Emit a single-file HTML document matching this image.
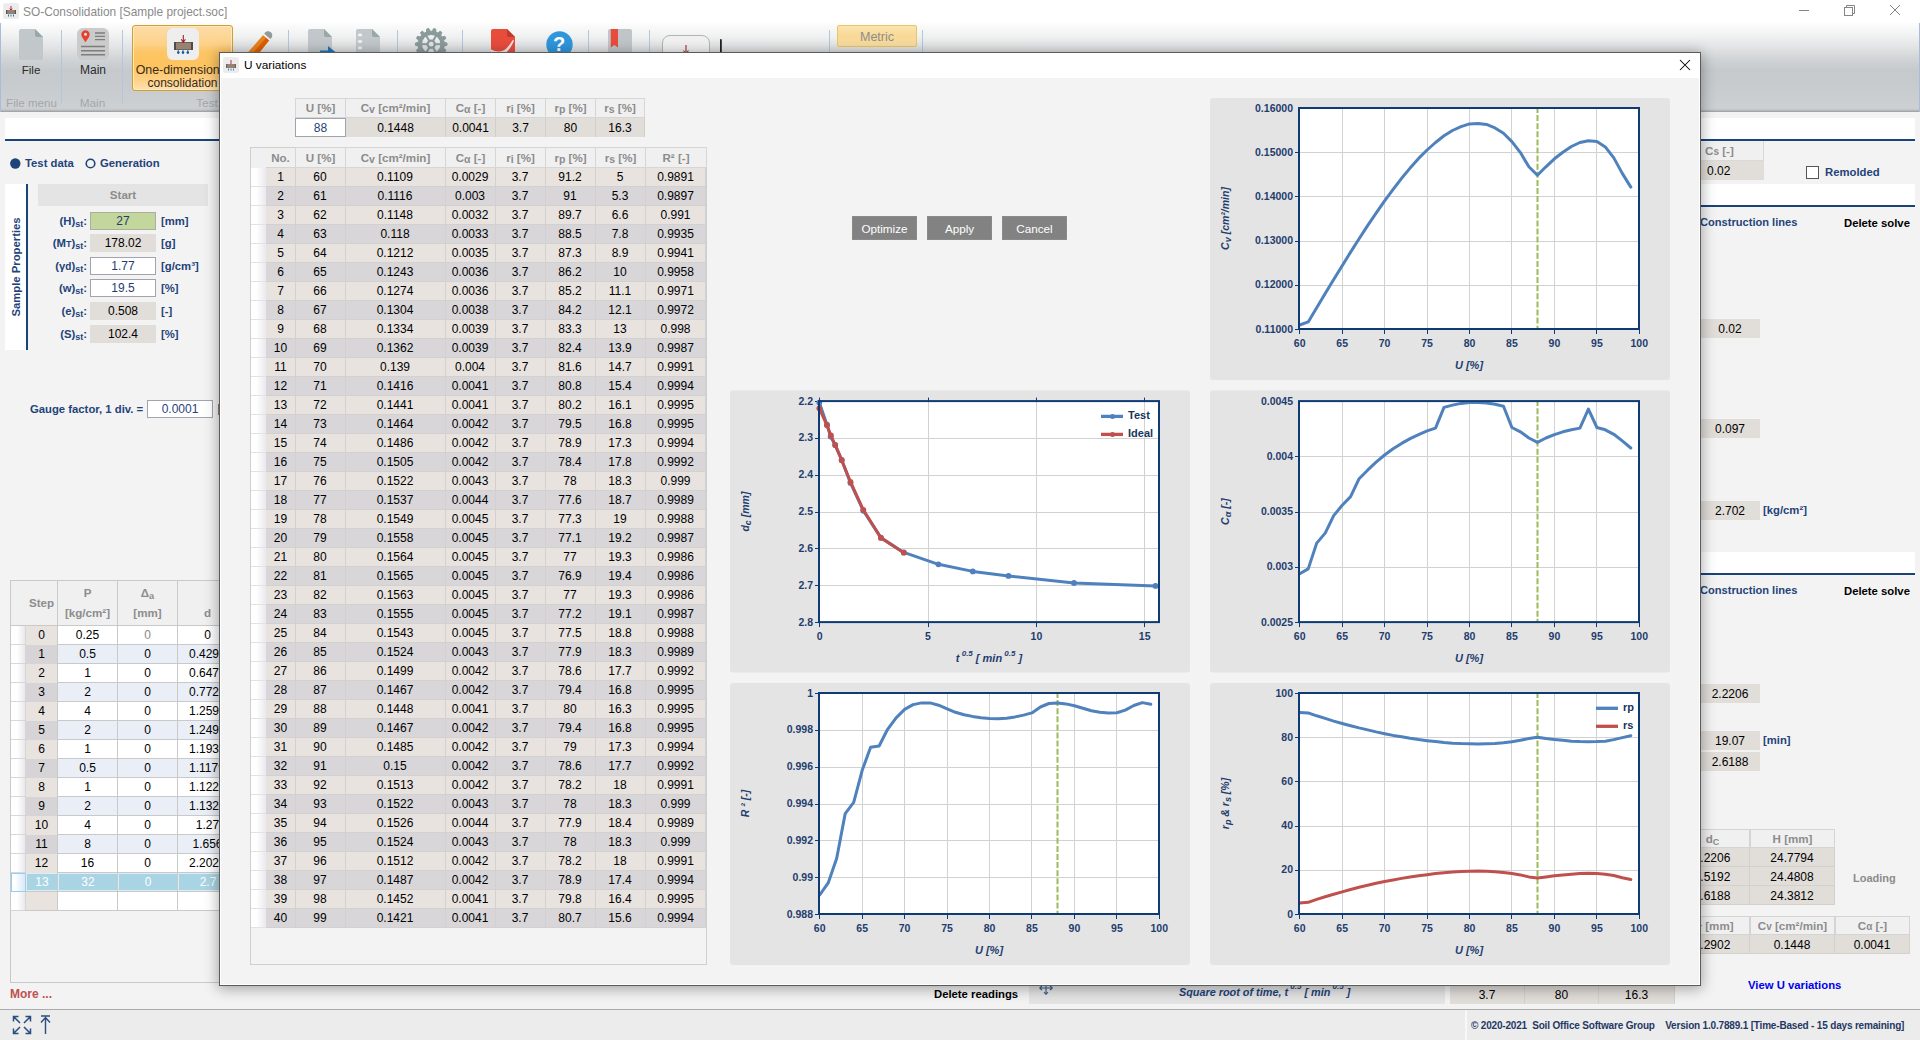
<!DOCTYPE html>
<html><head><meta charset="utf-8"><title>SO-Consolidation</title>
<style>
html,body{margin:0;padding:0}
body{width:1920px;height:1040px;position:relative;overflow:hidden;background:#f3f3f3;font-family:"Liberation Sans",sans-serif;font-size:12px;color:#000}
div,svg{position:absolute;box-sizing:border-box}
.t{text-align:center;white-space:nowrap;overflow:visible}
.b{font-weight:bold;font-size:11.3px}
.nv{color:#1f437a}
.gh{color:#8c8c8c;font-weight:bold;font-size:11.6px}
.l{text-align:left}
.r{text-align:right}
sub{font-size:80%;vertical-align:-2px;line-height:0}
sup{font-size:70%;vertical-align:4px;line-height:0}
svg text{font-family:"Liberation Sans",sans-serif}
</style></head>
<body>
<div style="left:0px;top:0px;width:1920px;height:23px;background:#fff"></div>
<svg style="left:3px;top:3px" width="16" height="16" viewBox="0 0 16 16"><rect x="0" y="0" width="16" height="16" rx="2.5" fill="#ececec"/><rect x="3" y="7" width="10" height="4" fill="#9a8270"/><rect x="3" y="7" width="1.2" height="4" fill="#555"/><rect x="11.8" y="7" width="1.2" height="4" fill="#555"/><path d="M8 3v4M6.8 5.6L8 7l1.2-1.4" stroke="#a0202a" stroke-width="0.9" fill="none"/><path d="M5.5 11.5v2M8 11.5v2M10.5 11.5v2" stroke="#1f78b4" stroke-width="1"/></svg>
<div class="t l" style="left:23px;top:1px;width:300px;height:23px;line-height:23px;color:#8a8a8a;font-size:11.9px">SO-Consolidation [Sample project.soc]</div>
<svg style="left:1780px;top:0" width="140" height="23" viewBox="0 0 140 23" fill="none" stroke="#858585" stroke-width="1"><path d="M19 10.5h10"/><rect x="64.5" y="7.5" width="8" height="8"/><path d="M66.5 7.5v-2h8v8h-2"/><path d="M110 5l10 10M120 5l-10 10"/></svg>
<div style="left:0px;top:23px;width:1920px;height:89px;background:linear-gradient(#fdfdfd 0px,#f1f2f2 12px,#e2e4e5 24px,#d1d4d6 36px,#c6cacd 47px,#c7cbce 60px,#cdd0d3 85px,#c4c7c9 87px,#a6a8aa 88px,#a0a2a3 89px)"></div>
<div style="left:0px;top:23px;width:1px;height:89px;background:#a9bcd8"></div>
<div style="left:1919px;top:23px;width:1px;height:89px;background:#a9bcd8"></div>
<div style="left:61px;top:30px;width:1px;height:74px;background:#b4c6de"></div>
<div style="left:122px;top:30px;width:1px;height:74px;background:#b4c6de"></div>
<div style="left:288px;top:30px;width:1px;height:74px;background:#b4c6de"></div>
<div style="left:397px;top:30px;width:1px;height:74px;background:#b4c6de"></div>
<div style="left:462px;top:30px;width:1px;height:74px;background:#b4c6de"></div>
<div style="left:588px;top:30px;width:1px;height:74px;background:#b4c6de"></div>
<div style="left:649px;top:30px;width:1px;height:74px;background:#b4c6de"></div>
<div style="left:829px;top:30px;width:1px;height:74px;background:#b4c6de"></div>
<div style="left:922px;top:30px;width:1px;height:74px;background:#b4c6de"></div>
<svg style="left:19px;top:29px" width="24" height="31" viewBox="0 0 24 31"><path d="M2 0h14l8 8v21a2 2 0 0 1-2 2h-20a2 2 0 0 1-2-2v-27a2 2 0 0 1 2-2z" fill="#c1c7ca"/><path d="M16 0l8 8h-6a2 2 0 0 1-2-2z" fill="#98a8a8"/></svg>
<div class="t" style="left:11px;top:62px;width:40px;height:16px;line-height:16px;color:#2b2b2b;font-size:11.6px">File</div>
<div class="t" style="left:1px;top:95px;width:61px;height:16px;line-height:16px;color:#a3a7aa;font-size:11.6px">File menu</div>
<svg style="left:77px;top:28px" width="32" height="32" viewBox="0 0 32 32"><rect width="32" height="32" rx="6" fill="#cbcbcb"/><g stroke="#7d7d7d" stroke-width="1.3"><path d="M18 5h10M18 8.4h10M18 11.7h10"/></g><g stroke="#7d7d7d" stroke-width="1.5"><path d="M4 18.6h24M4 22.7h24M4 26.8h24"/></g><path d="M8.5 2.2a4.2 4.2 0 0 1 4.2 4.2c0 2.6-2.6 5-4.2 7.8c-1.6-2.800-4.200-5.200-4.200-7.800a4.200 4.200 0 0 1 4.200-4.200z" fill="#e8402f"/><circle cx="8.500" cy="6.300" r="1.500" fill="#d9e4e8"/></svg>
<div class="t" style="left:73px;top:62px;width:40px;height:16px;line-height:16px;color:#2b2b2b;font-size:12px">Main</div>
<div class="t" style="left:62px;top:95px;width:61px;height:16px;line-height:16px;color:#a3a7aa;font-size:11.8px">Main</div>
<div style="left:132px;top:25px;width:101px;height:66px;border:1px solid #cf9f2f;border-radius:3px;background:linear-gradient(#fddca6 0,#fdd28a 18px,#fdc564 26px,#fdc45f 40px,#fdd186 54px,#fde2b2 64px);box-shadow:inset 0 0 0 1px #fee9c3"></div>
<svg style="left:167px;top:28px" width="32" height="32" viewBox="0 0 32 32"><rect width="32" height="32" rx="6" fill="#eeeeee"/><rect x="7" y="14" width="19" height="8" fill="#4b4b4d"/><rect x="9" y="14.600" width="15" height="6.900" fill="#9a8271"/><path d="M16.300 7v7.200M14.200 11.300l2.100 2.900l2.100-2.900" stroke="#a01f2a" stroke-width="1.100" fill="none"/><g fill="#0b5c9e"><circle cx="11.300" cy="24.600" r="1.300"/><circle cx="16" cy="24.600" r="1.300"/><circle cx="20.800" cy="24.600" r="1.300"/><path d="M11.300 22v2M16 22v2M20.800 22v2" stroke="#0b5c9e" stroke-width="0.800"/></g></svg>
<div class="t" style="left:132px;top:62px;width:101px;height:16px;line-height:16px;color:#3a2a1a;font-size:12.4px">One-dimensional</div>
<div class="t" style="left:132px;top:75px;width:101px;height:16px;line-height:16px;color:#3a2a1a;font-size:12px">consolidation</div>
<div class="t" style="left:177px;top:95px;width:60px;height:16px;line-height:16px;color:#a3a7aa;font-size:11.8px">Test</div>
<svg style="left:240px;top:28px" width="40" height="30" viewBox="0 0 40 30"><path d="M23.200 7l6 5.200L15 30H3z" fill="#e8821e"/><path d="M26.200 9.600l3 2.600L15 30H9z" fill="#dc5f02"/><path d="M23.200 7l1-1.200l6 5.200l-1 1.200z" fill="#f4f4f4"/><path d="M24.200 5.800a4.200 4.200 0 1 1 6 5.200z" fill="#909c9c"/></svg>
<svg overflow="visible" style="left:308px;top:29px" width="24" height="31" viewBox="0 0 24 31"><path d="M2 0h14l8 8v21a2 2 0 0 1-2 2h-20a2 2 0 0 1-2-2v-27a2 2 0 0 1 2-2z" fill="#c1c7ca"/><path d="M16 0l8 8h-6a2 2 0 0 1-2-2z" fill="#98a8a8"/><path d="M12 21.500h8v-4.500l8 6.500v8h-16z" fill="#2077b8"/></svg>
<svg style="left:356px;top:29px" width="24" height="31" viewBox="0 0 24 31"><path d="M2 0h14l8 8v21a2 2 0 0 1-2 2h-20a2 2 0 0 1-2-2v-27a2 2 0 0 1 2-2z" fill="#c1c7ca"/><path d="M16 0l8 8h-6a2 2 0 0 1-2-2z" fill="#98a8a8"/><g fill="#f1f3f3"><ellipse cx="4" cy="6" rx="2.200" ry="1.400"/><ellipse cx="4" cy="12.500" rx="2.200" ry="1.400"/><ellipse cx="4" cy="19" rx="2.200" ry="1.400"/><ellipse cx="4" cy="25.500" rx="2.200" ry="1.400"/></g></svg>
<svg style="left:414px;top:27px" width="34" height="34" viewBox="0 0 34 34"><path d="M30.2 15.4L33.0 16.1L33.0 18.3L30.2 19.0L29.7 21.2L31.9 23.0L30.9 25.1L28.1 24.4L26.7 26.3L27.9 28.8L26.1 30.2L23.9 28.4L21.8 29.5L21.8 32.3L19.6 32.8L18.4 30.2L16.0 30.2L14.8 32.8L12.6 32.3L12.6 29.5L10.5 28.4L8.3 30.2L6.5 28.8L7.7 26.3L6.3 24.4L3.5 25.1L2.5 23.0L4.7 21.2L4.2 19.0L1.4 18.3L1.4 16.1L4.2 15.4L4.7 13.2L2.5 11.4L3.5 9.3L6.3 10.0L7.7 8.1L6.5 5.6L8.3 4.2L10.5 6.0L12.6 4.9L12.6 2.1L14.8 1.6L16.0 4.2L18.4 4.2L19.6 1.6L21.8 2.1L21.8 4.9L23.9 6.0L26.1 4.2L27.9 5.6L26.7 8.1L28.1 10.0L30.9 9.3L31.9 11.4L29.7 13.2zM7.5 17.2a9.7 9.7 0 1 0 19.4 0a9.7 9.7 0 1 0 -19.4 0z" fill="#8a9a9a" fill-rule="evenodd" stroke="#8a9a9a" stroke-width="1" stroke-linejoin="round"/><path d="M17.2 17.2L27.7 17.2" stroke="#8a9a9a" stroke-width="2"/><path d="M17.2 17.2L22.4 26.3" stroke="#8a9a9a" stroke-width="2"/><path d="M17.2 17.2L12.0 26.3" stroke="#8a9a9a" stroke-width="2"/><path d="M17.2 17.2L6.7 17.2" stroke="#8a9a9a" stroke-width="2"/><path d="M17.2 17.2L11.9 8.1" stroke="#8a9a9a" stroke-width="2"/><path d="M17.2 17.2L22.4 8.1" stroke="#8a9a9a" stroke-width="2"/><circle cx="17.2" cy="17.2" r="4.700" fill="#8a9a9a"/><circle cx="17.2" cy="17.2" r="2.400" fill="#e2e3e4"/></svg>
<svg style="left:491px;top:29px" width="24" height="31" viewBox="0 0 24 31"><path d="M2 0h14l8 8v21a2 2 0 0 1-2 2h-20a2 2 0 0 1-2-2v-27a2 2 0 0 1 2-2z" fill="#e84c3d"/><path d="M16 0l8 8h-6a2 2 0 0 1-2-2z" fill="#c0392b"/><path d="M0 20.300c5 3 11 3 15-0.500c3-3 5-6 7-9l1 1c-2 4-4 8-7 11c-1 2-2 5-2 7h-2c0-2 0.500-4 1.500-6c-4 2.500-9 2.500-13.500 0z" fill="#f3e9e7"/></svg>
<svg style="left:546px;top:31px" width="28" height="28" viewBox="0 0 28 28"><circle cx="13.500" cy="13.500" r="13.200" fill="#2f96dc"/><text x="13" y="20.200" font-size="20" font-weight="bold" fill="#fff" text-anchor="middle">?</text></svg>
<svg style="left:608px;top:29px" width="25" height="31" viewBox="0 0 25 31"><rect width="24" height="31" rx="2" fill="#bfc5c8"/><path d="M2.800 0h7.200v18.500l-3.600-2.600l-3.600 2.600z" fill="#e84c3d"/></svg>
<div style="left:662px;top:35px;width:48px;height:40px;border:1px solid #b4b4b4;border-radius:8px;background:#f1f1f1"></div>
<svg style="left:680px;top:44px" width="12" height="12" viewBox="0 0 12 12"><path d="M6 1v8M3.500 6.500L6 9.500L8.500 6.500" stroke="#a02a38" stroke-width="1.100" fill="none"/></svg>
<div style="left:720px;top:39px;width:2px;height:20px;background:linear-gradient(90deg,#222 60%,#888);border-radius:1px 2px 0 0"></div>
<div style="left:837px;top:25px;width:80px;height:22px;border:1px solid #e9c566;border-radius:2px;background:linear-gradient(#fbe3b0,#f8d995 50%,#f9dda0)"></div>
<div class="t" style="left:837px;top:26px;width:80px;height:22px;line-height:22px;color:#8e8e8e;font-size:12.5px">Metric</div>
<div style="left:5px;top:118px;width:1910px;height:21px;background:#fff"></div>
<div style="left:5px;top:139px;width:1910px;height:2px;background:#1a4378"></div>
<div style="left:1700px;top:184px;width:215px;height:21px;background:#fff"></div>
<div style="left:1700px;top:205px;width:215px;height:2px;background:#1a4378"></div>
<div style="left:1700px;top:552px;width:215px;height:21px;background:#fff"></div>
<div style="left:1700px;top:573px;width:215px;height:2px;background:#1a4378"></div>
<svg style="left:9px;top:157px" width="100" height="13" viewBox="0 0 100 13"><circle cx="6.300" cy="6.500" r="5.200" fill="#1f4479"/><circle cx="81.500" cy="6.500" r="4.300" fill="none" stroke="#1f4479" stroke-width="1.600"/></svg>
<div class="t l b nv" style="left:25px;top:155px;width:60px;height:16px;line-height:16px;">Test data</div>
<div class="t l b nv" style="left:100px;top:155px;width:70px;height:16px;line-height:16px;">Generation</div>
<div style="left:5px;top:184px;width:21px;height:166px;background:#fff"></div>
<div style="left:26px;top:184px;width:2px;height:166px;background:#1a4378"></div>
<div class="t b nv" style="left:-59px;top:259px;width:150px;height:16px;line-height:16px;transform:rotate(-90deg)">Sample Properties</div>
<div style="left:38px;top:184px;width:170px;height:22px;background:#e4e4e4"></div>
<div class="t gh" style="left:38px;top:184px;width:170px;height:22px;line-height:22px;">Start</div>
<div class="t r b nv" style="left:31px;top:212px;width:56px;height:18px;line-height:18px;">(H)<sub>st</sub>:</div>
<div class="t" style="left:90px;top:212px;width:66px;height:18px;line-height:16px;background:#c3d69b;border:1px solid #a9b0a0;color:#1f3d6e">27</div>
<div class="t l b nv" style="left:161px;top:212px;width:50px;height:18px;line-height:18px;">[mm]</div>
<div class="t r b nv" style="left:31px;top:234px;width:56px;height:18px;line-height:18px;">(M<span style="font-size:9px">T</span>)<sub>st</sub>:</div>
<div class="t" style="left:90px;top:234px;width:66px;height:18px;line-height:18px;background:#e1ddd9;color:#000">178.02</div>
<div class="t l b nv" style="left:161px;top:234px;width:50px;height:18px;line-height:18px;">[g]</div>
<div class="t r b nv" style="left:31px;top:257px;width:56px;height:18px;line-height:18px;">(γ<span style="font-size:10px">d</span>)<sub>st</sub>:</div>
<div class="t" style="left:90px;top:257px;width:66px;height:18px;line-height:16px;background:#fff;border:1px solid #a3a3ad;color:#1f3d6e">1.77</div>
<div class="t l b nv" style="left:161px;top:257px;width:50px;height:18px;line-height:18px;">[g/cm³]</div>
<div class="t r b nv" style="left:31px;top:279px;width:56px;height:18px;line-height:18px;">(w)<sub>st</sub>:</div>
<div class="t" style="left:90px;top:279px;width:66px;height:18px;line-height:16px;background:#fff;border:1px solid #a3a3ad;color:#1f3d6e">19.5</div>
<div class="t l b nv" style="left:161px;top:279px;width:50px;height:18px;line-height:18px;">[%]</div>
<div class="t r b nv" style="left:31px;top:302px;width:56px;height:18px;line-height:18px;">(e)<sub>st</sub>:</div>
<div class="t" style="left:90px;top:302px;width:66px;height:18px;line-height:18px;background:#e1ddd9;color:#000">0.508</div>
<div class="t l b nv" style="left:161px;top:302px;width:50px;height:18px;line-height:18px;">[-]</div>
<div class="t r b nv" style="left:31px;top:325px;width:56px;height:18px;line-height:18px;">(S)<sub>st</sub>:</div>
<div class="t" style="left:90px;top:325px;width:66px;height:18px;line-height:18px;background:#e1ddd9;color:#000">102.4</div>
<div class="t l b nv" style="left:161px;top:325px;width:50px;height:18px;line-height:18px;">[%]</div>
<div class="t l b nv" style="left:30px;top:400px;width:113px;height:18px;line-height:18px;">Gauge factor, 1 div. =</div>
<div class="t nv" style="left:147px;top:400px;width:66px;height:18px;line-height:16px;background:#fff;border:1px solid #a3a3ad">0.0001</div>
<div style="left:218px;top:404px;width:1px;height:11px;background:#9a7a6a"></div>
<div style="left:10px;top:580px;width:215px;height:403px;background:#f3f3f3;border:1px solid #c9c9c9"></div>
<div style="left:11px;top:581px;width:214px;height:45px;background:#f0f0f0;border-bottom:1px solid #c9c9c9"></div>
<div style="left:57px;top:581px;width:1px;height:330px;background:#c9c9c9"></div>
<div style="left:117px;top:581px;width:1px;height:330px;background:#c9c9c9"></div>
<div style="left:177px;top:581px;width:1px;height:330px;background:#c9c9c9"></div>
<div class="t gh" style="left:26px;top:594px;width:31px;height:18px;line-height:18px;">Step</div>
<div class="t gh" style="left:58px;top:584px;width:59px;height:18px;line-height:18px;">P</div>
<div class="t gh" style="left:58px;top:604px;width:59px;height:18px;line-height:18px;">[kg/cm²]</div>
<div class="t gh" style="left:118px;top:584px;width:59px;height:18px;line-height:18px;">Δ<sub>a</sub></div>
<div class="t gh" style="left:118px;top:604px;width:59px;height:18px;line-height:18px;">[mm]</div>
<div class="t gh" style="left:178px;top:604px;width:59px;height:18px;line-height:18px;">d</div>
<div style="left:11px;top:626px;width:15px;height:19px;background:linear-gradient(90deg,#fff 40%,#e6e6ea);border-bottom:1px solid #d8d8d8"></div>
<div class="t" style="left:26px;top:626px;width:31px;height:19px;line-height:19px;background:#e8e3df">0</div>
<div class="t" style="left:58px;top:626px;width:59px;height:19px;line-height:19px;background:#fff;border-bottom:1px solid #c9c9c9">0.25</div>
<div class="t" style="left:118px;top:626px;width:59px;height:19px;line-height:19px;background:#fff;border-bottom:1px solid #c9c9c9;color:#888">0</div>
<div class="t" style="left:178px;top:626px;width:59px;height:19px;line-height:19px;background:#fff;border-bottom:1px solid #c9c9c9">0</div>
<div style="left:57px;top:626px;width:1px;height:19px;background:#c9c9c9"></div>
<div style="left:117px;top:626px;width:1px;height:19px;background:#c9c9c9"></div>
<div style="left:177px;top:626px;width:1px;height:19px;background:#c9c9c9"></div>
<div style="left:11px;top:645px;width:15px;height:19px;background:linear-gradient(90deg,#fff 40%,#e6e6ea);border-bottom:1px solid #d8d8d8"></div>
<div class="t" style="left:26px;top:645px;width:31px;height:19px;line-height:19px;background:#d6d4d6">1</div>
<div class="t" style="left:58px;top:645px;width:59px;height:19px;line-height:19px;background:#e9eef7;border-bottom:1px solid #c9c9c9">0.5</div>
<div class="t" style="left:118px;top:645px;width:59px;height:19px;line-height:19px;background:#e9eef7;border-bottom:1px solid #c9c9c9">0</div>
<div class="t" style="left:178px;top:645px;width:70px;height:19px;line-height:19px;background:#e9eef7;border-bottom:1px solid #c9c9c9;text-align:left;padding-left:11px">0.4299</div>
<div style="left:57px;top:645px;width:1px;height:19px;background:#c9c9c9"></div>
<div style="left:117px;top:645px;width:1px;height:19px;background:#c9c9c9"></div>
<div style="left:177px;top:645px;width:1px;height:19px;background:#c9c9c9"></div>
<div style="left:11px;top:664px;width:15px;height:19px;background:linear-gradient(90deg,#fff 40%,#e6e6ea);border-bottom:1px solid #d8d8d8"></div>
<div class="t" style="left:26px;top:664px;width:31px;height:19px;line-height:19px;background:#e8e3df">2</div>
<div class="t" style="left:58px;top:664px;width:59px;height:19px;line-height:19px;background:#fff;border-bottom:1px solid #c9c9c9">1</div>
<div class="t" style="left:118px;top:664px;width:59px;height:19px;line-height:19px;background:#fff;border-bottom:1px solid #c9c9c9">0</div>
<div class="t" style="left:178px;top:664px;width:70px;height:19px;line-height:19px;background:#fff;border-bottom:1px solid #c9c9c9;text-align:left;padding-left:11px">0.6479</div>
<div style="left:57px;top:664px;width:1px;height:19px;background:#c9c9c9"></div>
<div style="left:117px;top:664px;width:1px;height:19px;background:#c9c9c9"></div>
<div style="left:177px;top:664px;width:1px;height:19px;background:#c9c9c9"></div>
<div style="left:11px;top:683px;width:15px;height:19px;background:linear-gradient(90deg,#fff 40%,#e6e6ea);border-bottom:1px solid #d8d8d8"></div>
<div class="t" style="left:26px;top:683px;width:31px;height:19px;line-height:19px;background:#d6d4d6">3</div>
<div class="t" style="left:58px;top:683px;width:59px;height:19px;line-height:19px;background:#e9eef7;border-bottom:1px solid #c9c9c9">2</div>
<div class="t" style="left:118px;top:683px;width:59px;height:19px;line-height:19px;background:#e9eef7;border-bottom:1px solid #c9c9c9">0</div>
<div class="t" style="left:178px;top:683px;width:70px;height:19px;line-height:19px;background:#e9eef7;border-bottom:1px solid #c9c9c9;text-align:left;padding-left:11px">0.7729</div>
<div style="left:57px;top:683px;width:1px;height:19px;background:#c9c9c9"></div>
<div style="left:117px;top:683px;width:1px;height:19px;background:#c9c9c9"></div>
<div style="left:177px;top:683px;width:1px;height:19px;background:#c9c9c9"></div>
<div style="left:11px;top:702px;width:15px;height:19px;background:linear-gradient(90deg,#fff 40%,#e6e6ea);border-bottom:1px solid #d8d8d8"></div>
<div class="t" style="left:26px;top:702px;width:31px;height:19px;line-height:19px;background:#e8e3df">4</div>
<div class="t" style="left:58px;top:702px;width:59px;height:19px;line-height:19px;background:#fff;border-bottom:1px solid #c9c9c9">4</div>
<div class="t" style="left:118px;top:702px;width:59px;height:19px;line-height:19px;background:#fff;border-bottom:1px solid #c9c9c9">0</div>
<div class="t" style="left:178px;top:702px;width:70px;height:19px;line-height:19px;background:#fff;border-bottom:1px solid #c9c9c9;text-align:left;padding-left:11px">1.2599</div>
<div style="left:57px;top:702px;width:1px;height:19px;background:#c9c9c9"></div>
<div style="left:117px;top:702px;width:1px;height:19px;background:#c9c9c9"></div>
<div style="left:177px;top:702px;width:1px;height:19px;background:#c9c9c9"></div>
<div style="left:11px;top:721px;width:15px;height:19px;background:linear-gradient(90deg,#fff 40%,#e6e6ea);border-bottom:1px solid #d8d8d8"></div>
<div class="t" style="left:26px;top:721px;width:31px;height:19px;line-height:19px;background:#d6d4d6">5</div>
<div class="t" style="left:58px;top:721px;width:59px;height:19px;line-height:19px;background:#e9eef7;border-bottom:1px solid #c9c9c9">2</div>
<div class="t" style="left:118px;top:721px;width:59px;height:19px;line-height:19px;background:#e9eef7;border-bottom:1px solid #c9c9c9">0</div>
<div class="t" style="left:178px;top:721px;width:70px;height:19px;line-height:19px;background:#e9eef7;border-bottom:1px solid #c9c9c9;text-align:left;padding-left:11px">1.2499</div>
<div style="left:57px;top:721px;width:1px;height:19px;background:#c9c9c9"></div>
<div style="left:117px;top:721px;width:1px;height:19px;background:#c9c9c9"></div>
<div style="left:177px;top:721px;width:1px;height:19px;background:#c9c9c9"></div>
<div style="left:11px;top:740px;width:15px;height:19px;background:linear-gradient(90deg,#fff 40%,#e6e6ea);border-bottom:1px solid #d8d8d8"></div>
<div class="t" style="left:26px;top:740px;width:31px;height:19px;line-height:19px;background:#e8e3df">6</div>
<div class="t" style="left:58px;top:740px;width:59px;height:19px;line-height:19px;background:#fff;border-bottom:1px solid #c9c9c9">1</div>
<div class="t" style="left:118px;top:740px;width:59px;height:19px;line-height:19px;background:#fff;border-bottom:1px solid #c9c9c9">0</div>
<div class="t" style="left:178px;top:740px;width:70px;height:19px;line-height:19px;background:#fff;border-bottom:1px solid #c9c9c9;text-align:left;padding-left:11px">1.1939</div>
<div style="left:57px;top:740px;width:1px;height:19px;background:#c9c9c9"></div>
<div style="left:117px;top:740px;width:1px;height:19px;background:#c9c9c9"></div>
<div style="left:177px;top:740px;width:1px;height:19px;background:#c9c9c9"></div>
<div style="left:11px;top:759px;width:15px;height:19px;background:linear-gradient(90deg,#fff 40%,#e6e6ea);border-bottom:1px solid #d8d8d8"></div>
<div class="t" style="left:26px;top:759px;width:31px;height:19px;line-height:19px;background:#d6d4d6">7</div>
<div class="t" style="left:58px;top:759px;width:59px;height:19px;line-height:19px;background:#e9eef7;border-bottom:1px solid #c9c9c9">0.5</div>
<div class="t" style="left:118px;top:759px;width:59px;height:19px;line-height:19px;background:#e9eef7;border-bottom:1px solid #c9c9c9">0</div>
<div class="t" style="left:178px;top:759px;width:70px;height:19px;line-height:19px;background:#e9eef7;border-bottom:1px solid #c9c9c9;text-align:left;padding-left:11px">1.1179</div>
<div style="left:57px;top:759px;width:1px;height:19px;background:#c9c9c9"></div>
<div style="left:117px;top:759px;width:1px;height:19px;background:#c9c9c9"></div>
<div style="left:177px;top:759px;width:1px;height:19px;background:#c9c9c9"></div>
<div style="left:11px;top:778px;width:15px;height:19px;background:linear-gradient(90deg,#fff 40%,#e6e6ea);border-bottom:1px solid #d8d8d8"></div>
<div class="t" style="left:26px;top:778px;width:31px;height:19px;line-height:19px;background:#e8e3df">8</div>
<div class="t" style="left:58px;top:778px;width:59px;height:19px;line-height:19px;background:#fff;border-bottom:1px solid #c9c9c9">1</div>
<div class="t" style="left:118px;top:778px;width:59px;height:19px;line-height:19px;background:#fff;border-bottom:1px solid #c9c9c9">0</div>
<div class="t" style="left:178px;top:778px;width:70px;height:19px;line-height:19px;background:#fff;border-bottom:1px solid #c9c9c9;text-align:left;padding-left:11px">1.1229</div>
<div style="left:57px;top:778px;width:1px;height:19px;background:#c9c9c9"></div>
<div style="left:117px;top:778px;width:1px;height:19px;background:#c9c9c9"></div>
<div style="left:177px;top:778px;width:1px;height:19px;background:#c9c9c9"></div>
<div style="left:11px;top:797px;width:15px;height:19px;background:linear-gradient(90deg,#fff 40%,#e6e6ea);border-bottom:1px solid #d8d8d8"></div>
<div class="t" style="left:26px;top:797px;width:31px;height:19px;line-height:19px;background:#d6d4d6">9</div>
<div class="t" style="left:58px;top:797px;width:59px;height:19px;line-height:19px;background:#e9eef7;border-bottom:1px solid #c9c9c9">2</div>
<div class="t" style="left:118px;top:797px;width:59px;height:19px;line-height:19px;background:#e9eef7;border-bottom:1px solid #c9c9c9">0</div>
<div class="t" style="left:178px;top:797px;width:70px;height:19px;line-height:19px;background:#e9eef7;border-bottom:1px solid #c9c9c9;text-align:left;padding-left:11px">1.1329</div>
<div style="left:57px;top:797px;width:1px;height:19px;background:#c9c9c9"></div>
<div style="left:117px;top:797px;width:1px;height:19px;background:#c9c9c9"></div>
<div style="left:177px;top:797px;width:1px;height:19px;background:#c9c9c9"></div>
<div style="left:11px;top:816px;width:15px;height:19px;background:linear-gradient(90deg,#fff 40%,#e6e6ea);border-bottom:1px solid #d8d8d8"></div>
<div class="t" style="left:26px;top:816px;width:31px;height:19px;line-height:19px;background:#e8e3df">10</div>
<div class="t" style="left:58px;top:816px;width:59px;height:19px;line-height:19px;background:#fff;border-bottom:1px solid #c9c9c9">4</div>
<div class="t" style="left:118px;top:816px;width:59px;height:19px;line-height:19px;background:#fff;border-bottom:1px solid #c9c9c9">0</div>
<div class="t" style="left:178px;top:816px;width:59px;height:19px;line-height:19px;background:#fff;border-bottom:1px solid #c9c9c9">1.27</div>
<div style="left:57px;top:816px;width:1px;height:19px;background:#c9c9c9"></div>
<div style="left:117px;top:816px;width:1px;height:19px;background:#c9c9c9"></div>
<div style="left:177px;top:816px;width:1px;height:19px;background:#c9c9c9"></div>
<div style="left:11px;top:835px;width:15px;height:19px;background:linear-gradient(90deg,#fff 40%,#e6e6ea);border-bottom:1px solid #d8d8d8"></div>
<div class="t" style="left:26px;top:835px;width:31px;height:19px;line-height:19px;background:#d6d4d6">11</div>
<div class="t" style="left:58px;top:835px;width:59px;height:19px;line-height:19px;background:#e9eef7;border-bottom:1px solid #c9c9c9">8</div>
<div class="t" style="left:118px;top:835px;width:59px;height:19px;line-height:19px;background:#e9eef7;border-bottom:1px solid #c9c9c9">0</div>
<div class="t" style="left:178px;top:835px;width:59px;height:19px;line-height:19px;background:#e9eef7;border-bottom:1px solid #c9c9c9">1.656</div>
<div style="left:57px;top:835px;width:1px;height:19px;background:#c9c9c9"></div>
<div style="left:117px;top:835px;width:1px;height:19px;background:#c9c9c9"></div>
<div style="left:177px;top:835px;width:1px;height:19px;background:#c9c9c9"></div>
<div style="left:11px;top:854px;width:15px;height:19px;background:linear-gradient(90deg,#fff 40%,#e6e6ea);border-bottom:1px solid #d8d8d8"></div>
<div class="t" style="left:26px;top:854px;width:31px;height:19px;line-height:19px;background:#e8e3df">12</div>
<div class="t" style="left:58px;top:854px;width:59px;height:19px;line-height:19px;background:#fff;border-bottom:1px solid #c9c9c9">16</div>
<div class="t" style="left:118px;top:854px;width:59px;height:19px;line-height:19px;background:#fff;border-bottom:1px solid #c9c9c9">0</div>
<div class="t" style="left:178px;top:854px;width:70px;height:19px;line-height:19px;background:#fff;border-bottom:1px solid #c9c9c9;text-align:left;padding-left:11px">2.2029</div>
<div style="left:57px;top:854px;width:1px;height:19px;background:#c9c9c9"></div>
<div style="left:117px;top:854px;width:1px;height:19px;background:#c9c9c9"></div>
<div style="left:177px;top:854px;width:1px;height:19px;background:#c9c9c9"></div>
<div style="left:11px;top:873px;width:15px;height:19px;background:linear-gradient(90deg,#fff 40%,#e6e6ea);border-bottom:1px solid #d8d8d8"></div>
<div style="left:11px;top:873px;width:214px;height:19px;background:#fff;border-bottom:1px solid #c9c9c9"></div>
<div style="left:11px;top:873px;width:15px;height:19px;background:linear-gradient(90deg,#fff 20%,#d6eaf6);border:1px solid #8fd0f7"></div>
<div class="t" style="left:27px;top:874px;width:30px;height:16px;line-height:17.0px;background:#a9d4e3;color:#fff;box-shadow:0 0 0 1px #dceef5">13</div>
<div class="t" style="left:59px;top:874px;width:58px;height:16px;line-height:17.0px;background:#a9d4e3;color:#fff;box-shadow:0 0 0 1px #dceef5">32</div>
<div class="t" style="left:119px;top:874px;width:58px;height:16px;line-height:17.0px;background:#a9d4e3;color:#fff;box-shadow:0 0 0 1px #dceef5">0</div>
<div class="t" style="left:179px;top:874px;width:58px;height:16px;line-height:17.0px;background:#a9d4e3;color:#fff;box-shadow:0 0 0 1px #dceef5">2.7</div>
<div style="left:57px;top:873px;width:1px;height:19px;background:#c9c9c9"></div>
<div style="left:117px;top:873px;width:1px;height:19px;background:#c9c9c9"></div>
<div style="left:177px;top:873px;width:1px;height:19px;background:#c9c9c9"></div>
<div style="left:11px;top:892px;width:15px;height:19px;background:linear-gradient(90deg,#fff 40%,#e6e6ea)"></div>
<div style="left:26px;top:892px;width:31px;height:19px;background:#e8e3df;border-bottom:1px solid #c9c9c9"></div>
<div style="left:11px;top:910px;width:15px;height:1px;background:#d4d4d4"></div>
<div style="left:58px;top:892px;width:167px;height:19px;background:#fff;border-bottom:1px solid #c9c9c9"></div>
<div style="left:25px;top:626px;width:1px;height:285px;background:rgba(200,200,200,0.55)"></div>
<div style="left:57px;top:892px;width:1px;height:19px;background:#c9c9c9"></div>
<div style="left:117px;top:892px;width:1px;height:19px;background:#c9c9c9"></div>
<div style="left:177px;top:892px;width:1px;height:19px;background:#c9c9c9"></div>
<div class="t l b" style="left:10px;top:986px;width:50px;height:16px;line-height:16px;color:#c0504d;font-size:12px">More ...</div>
<div style="left:1700px;top:141px;width:64px;height:20px;background:#f0f0f0;border-bottom:1px solid #d9d9d9;border-right:1px solid #d9d9d9"></div>
<div class="t l gh" style="left:1705px;top:141px;width:40px;height:20px;line-height:20px;">C<span style="font-size:10px">s</span> [-]</div>
<div style="left:1700px;top:161px;width:64px;height:19px;background:#e1ddd9"></div>
<div class="t l" style="left:1707px;top:161px;width:40px;height:19px;line-height:21px;">0.02</div>
<div style="left:1806px;top:166px;width:13px;height:13px;background:#fff;border:1px solid #555"></div>
<div class="t l b nv" style="left:1825px;top:164px;width:70px;height:16px;line-height:16px;">Remolded</div>
<div class="t l b nv" style="left:1700px;top:214px;width:120px;height:16px;line-height:16px;font-size:11.1px">Construction lines</div>
<div class="t l b" style="left:1844px;top:215px;width:70px;height:16px;line-height:16px;">Delete solve</div>
<div class="t l b nv" style="left:1700px;top:582px;width:120px;height:16px;line-height:16px;font-size:11.1px">Construction lines</div>
<div class="t l b" style="left:1844px;top:583px;width:70px;height:16px;line-height:16px;">Delete solve</div>
<div class="t" style="left:1700px;top:319px;width:60px;height:19px;line-height:21px;background:#e1ddd9">0.02</div>
<div class="t" style="left:1700px;top:419px;width:60px;height:19px;line-height:21px;background:#e1ddd9">0.097</div>
<div class="t" style="left:1700px;top:501px;width:60px;height:19px;line-height:21px;background:#e1ddd9">2.702</div>
<div class="t" style="left:1700px;top:684px;width:60px;height:19px;line-height:21px;background:#e1ddd9">2.2206</div>
<div class="t" style="left:1700px;top:731px;width:60px;height:19px;line-height:21px;background:#e1ddd9">19.07</div>
<div class="t" style="left:1700px;top:752px;width:60px;height:19px;line-height:21px;background:#e1ddd9">2.6188</div>
<div class="t l b nv" style="left:1763px;top:501px;width:60px;height:18px;line-height:18px;">[kg/cm²]</div>
<div class="t l b nv" style="left:1763px;top:731px;width:60px;height:18px;line-height:18px;">[min]</div>
<div class="t gh" style="left:1675px;top:829px;width:75px;height:19px;line-height:17px;background:#f0f0f0;border:1px solid #d4d4d4">d<span style="font-size:9px;vertical-align:-2px">C</span></div>
<div class="t gh" style="left:1750px;top:829px;width:85px;height:19px;line-height:17px;background:#f0f0f0;border:1px solid #d4d4d4">H [mm]</div>
<div class="t" style="left:1675px;top:848px;width:75px;height:19px;line-height:21px;background:#e1ddd9;border-right:1px solid #d4d0cc;border-bottom:1px solid #d4d0cc">2.2206</div>
<div class="t" style="left:1750px;top:848px;width:85px;height:19px;line-height:21px;background:#e1ddd9;border-right:1px solid #d4d0cc;border-bottom:1px solid #d4d0cc">24.7794</div>
<div class="t" style="left:1675px;top:867px;width:75px;height:19px;line-height:21px;background:#e1ddd9;border-right:1px solid #d4d0cc;border-bottom:1px solid #d4d0cc">2.5192</div>
<div class="t" style="left:1750px;top:867px;width:85px;height:19px;line-height:21px;background:#e1ddd9;border-right:1px solid #d4d0cc;border-bottom:1px solid #d4d0cc">24.4808</div>
<div class="t" style="left:1675px;top:886px;width:75px;height:19px;line-height:21px;background:#e1ddd9;border-right:1px solid #d4d0cc;border-bottom:1px solid #d4d0cc">2.6188</div>
<div class="t" style="left:1750px;top:886px;width:85px;height:19px;line-height:21px;background:#e1ddd9;border-right:1px solid #d4d0cc;border-bottom:1px solid #d4d0cc">24.3812</div>
<div class="t gh" style="left:1675px;top:916px;width:75px;height:19px;line-height:17px;background:#f0f0f0;border:1px solid #d4d4d4">d<span style="font-size:9px">r</span> [mm]</div>
<div class="t gh" style="left:1750px;top:916px;width:85px;height:19px;line-height:17px;background:#f0f0f0;border:1px solid #d4d4d4">C<span style="font-size:10px">v</span> [cm²/min]</div>
<div class="t gh" style="left:1835px;top:916px;width:75px;height:19px;line-height:17px;background:#f0f0f0;border:1px solid #d4d4d4">C<span style="font-size:10px">α</span> [-]</div>
<div class="t" style="left:1675px;top:935px;width:75px;height:19px;line-height:21px;background:#e1ddd9;border-right:1px solid #d4d0cc;border-bottom:1px solid #d4d0cc">2.2902</div>
<div class="t" style="left:1750px;top:935px;width:85px;height:19px;line-height:21px;background:#e1ddd9;border-right:1px solid #d4d0cc;border-bottom:1px solid #d4d0cc">0.1448</div>
<div class="t" style="left:1835px;top:935px;width:75px;height:19px;line-height:21px;background:#e1ddd9;border-right:1px solid #d4d0cc;border-bottom:1px solid #d4d0cc">0.0041</div>
<div class="t l gh" style="left:1853px;top:870px;width:50px;height:16px;line-height:16px;font-size:11px">Loading</div>
<div class="t l b" style="left:1748px;top:977px;width:100px;height:16px;line-height:16px;color:#0000ee">View U variations</div>
<div class="t l b" style="left:934px;top:986px;width:90px;height:16px;line-height:16px;">Delete readings</div>
<div style="left:1029px;top:960px;width:416px;height:44px;background:#e4e4e4"></div>
<svg style="left:1038px;top:980px" width="16" height="16" viewBox="0 0 16 16" fill="none" stroke="#3b5f8f" stroke-width="1.100"><path d="M8 1v13M1.500 8h13M8 14.500l-2-2.500M8 14.500l2-2.500M1.500 8l2.500-2M1.500 8l2.500 2M14.500 8l-2.500-2M14.500 8l-2.500 2"/></svg>
<div class="t b nv" style="left:1179px;top:984px;width:172px;height:16px;line-height:16px;font-style:italic;font-size:10.85px;text-align:left">Square root of time, t<sup style="font-size:8px;vertical-align:7px"> 0.5</sup> [ min<sup style="font-size:8px;vertical-align:7px"> 0.5</sup> ]</div>
<div class="t" style="left:1450px;top:985px;width:75px;height:19px;line-height:21px;background:#e1ddd9;border-right:1px solid #d4d0cc">3.7</div>
<div class="t" style="left:1525px;top:985px;width:74px;height:19px;line-height:21px;background:#e1ddd9;border-right:1px solid #d4d0cc">80</div>
<div class="t" style="left:1599px;top:985px;width:76px;height:19px;line-height:21px;background:#e1ddd9;border-right:1px solid #d4d0cc">16.3</div>
<div style="left:0px;top:1009px;width:1920px;height:31px;background:#ececec;border-top:1px solid #ababab"></div>
<div style="left:1465px;top:1010px;width:2px;height:30px;background:#f8f8f8"></div>
<svg style="left:12px;top:1015px" width="42" height="20" viewBox="0 0 42 20" fill="none" stroke="#2a4d7f" stroke-width="1.500"><path d="M1.500 6.500v-5h5M1.500 1.500l6.500 6.500M18.500 6.500v-5h-5M18.500 1.500l-6.500 6.500M1.500 13.500v5h5M1.500 18.500l6.500-6.500M18.500 13.500v5h-5M18.500 18.500l-6.500-6.500"/><path d="M33.500 19v-16M29 7.500l4.500-5l4.500 5M29 1h9" stroke-width="1.400"/></svg>
<div class="t l b" style="left:1471px;top:1018px;width:440px;height:16px;line-height:16px;font-size:10px;letter-spacing:-0.18px;color:#1f3864">© 2020-2021&nbsp; Soil Office Software Group&nbsp;&nbsp;&nbsp; Version 1.0.7889.1 [Time-Based - 15 days remaining]</div>
<div style="left:219px;top:52px;width:1482px;height:934px;background:#f3f3f3;border:1px solid #5b5b5b;box-shadow:0 2px 13px 1px rgba(0,0,0,0.33)"></div>
<div style="left:220px;top:53px;width:1480px;height:932px;border:1px solid #fff"></div>
<div style="left:220px;top:53px;width:1480px;height:25px;background:#fff"></div>
<svg style="left:223px;top:57px" width="16" height="16" viewBox="0 0 16 16"><rect x="0" y="0" width="16" height="16" rx="2.500" fill="#ececec"/><rect x="3" y="7" width="10" height="4" fill="#9a8270"/><rect x="3" y="7" width="1.200" height="4" fill="#666"/><rect x="11.800" y="7" width="1.200" height="4" fill="#666"/><path d="M8 3v4" stroke="#c0506a" stroke-width="1.200" fill="none"/><path d="M5.500 11.500v2M8 11.500v2M10.500 11.500v2" stroke="#3b8bc4" stroke-width="1"/></svg>
<div class="t l" style="left:244px;top:55px;width:100px;height:20px;line-height:20px;font-size:11.8px">U variations</div>
<svg style="left:1679px;top:59px" width="12" height="12" viewBox="0 0 12 12"><path d="M1 1l10 10M11 1l-10 10" stroke="#000" stroke-width="1.050"/></svg>
<style>.s{font-size:10.5px;position:relative;top:1px}.hc{background:#f0f0f0;border:1px solid #d6d6d6}</style>
<div class="t gh hc" style="left:295px;top:98px;width:51px;height:20px;line-height:18px;">U [%]</div>
<div class="t gh hc" style="left:345px;top:98px;width:101px;height:20px;line-height:18px;">C<span class="s">v</span> [cm²/min]</div>
<div class="t gh hc" style="left:445px;top:98px;width:51px;height:20px;line-height:18px;">C<span class="s">α</span> [-]</div>
<div class="t gh hc" style="left:495px;top:98px;width:51px;height:20px;line-height:18px;">r<span class="s">i</span> [%]</div>
<div class="t gh hc" style="left:545px;top:98px;width:51px;height:20px;line-height:18px;">r<span class="s">p</span> [%]</div>
<div class="t gh hc" style="left:595px;top:98px;width:50px;height:20px;line-height:18px;">r<span class="s">s</span> [%]</div>
<div class="t nv" style="left:295px;top:118px;width:51px;height:19px;line-height:18px;background:#fff;border:1px solid #a3a3ad">88</div>
<div class="t" style="left:346px;top:118px;width:100px;height:19px;line-height:21px;background:#e1ddd9;border-right:1px solid #d2cec9">0.1448</div>
<div class="t" style="left:446px;top:118px;width:50px;height:19px;line-height:21px;background:#e1ddd9;border-right:1px solid #d2cec9">0.0041</div>
<div class="t" style="left:496px;top:118px;width:50px;height:19px;line-height:21px;background:#e1ddd9;border-right:1px solid #d2cec9">3.7</div>
<div class="t" style="left:546px;top:118px;width:50px;height:19px;line-height:21px;background:#e1ddd9;border-right:1px solid #d2cec9">80</div>
<div class="t" style="left:596px;top:118px;width:49px;height:19px;line-height:21px;background:#e1ddd9;border-right:1px solid #d2cec9">16.3</div>
<div style="left:250px;top:147px;width:457px;height:818px;border:1px solid #cfcfcf;background:#f3f3f3"></div>
<div style="left:251px;top:148px;width:15px;height:20px;background:#f0f0f0"></div>
<div class="t gh" style="left:266px;top:148px;width:29px;height:20px;line-height:19.0px;background:#f0f0f0;border-bottom:1px solid #d4d4d4">No.</div>
<div class="t gh hc" style="left:295px;top:147px;width:51px;height:21px;line-height:20.0px;">U [%]</div>
<div class="t gh hc" style="left:345px;top:147px;width:101px;height:21px;line-height:20.0px;">C<span class="s">v</span> [cm²/min]</div>
<div class="t gh hc" style="left:445px;top:147px;width:51px;height:21px;line-height:20.0px;">C<span class="s">α</span> [-]</div>
<div class="t gh hc" style="left:495px;top:147px;width:51px;height:21px;line-height:20.0px;">r<span class="s">i</span> [%]</div>
<div class="t gh hc" style="left:545px;top:147px;width:51px;height:21px;line-height:20.0px;">r<span class="s">p</span> [%]</div>
<div class="t gh hc" style="left:595px;top:147px;width:51px;height:21px;line-height:20.0px;">r<span class="s">s</span> [%]</div>
<div class="t gh hc" style="left:645px;top:147px;width:62px;height:21px;line-height:20.0px;">R² [-]</div>
<div style="left:251px;top:168px;width:15px;height:19px;background:linear-gradient(90deg,#fff 35%,#e9e9ee);border-bottom:1px solid #e2e2e2"></div>
<div style="left:266px;top:168px;width:440px;height:19px;background:#e8e3df;border-bottom:1px solid #d3d1d0"></div>
<div class="t" style="left:266px;top:168px;width:29px;height:19px;line-height:19px;">1</div>
<div class="t" style="left:295px;top:168px;width:50px;height:19px;line-height:19px;">60</div>
<div class="t" style="left:345px;top:168px;width:100px;height:19px;line-height:19px;">0.1109</div>
<div class="t" style="left:445px;top:168px;width:50px;height:19px;line-height:19px;">0.0029</div>
<div class="t" style="left:495px;top:168px;width:50px;height:19px;line-height:19px;">3.7</div>
<div class="t" style="left:545px;top:168px;width:50px;height:19px;line-height:19px;">91.2</div>
<div class="t" style="left:595px;top:168px;width:50px;height:19px;line-height:19px;">5</div>
<div class="t" style="left:645px;top:168px;width:61px;height:19px;line-height:19px;">0.9891</div>
<div style="left:295px;top:168px;width:1px;height:19px;background:#d3d1d0"></div>
<div style="left:345px;top:168px;width:1px;height:19px;background:#d3d1d0"></div>
<div style="left:445px;top:168px;width:1px;height:19px;background:#d3d1d0"></div>
<div style="left:495px;top:168px;width:1px;height:19px;background:#d3d1d0"></div>
<div style="left:545px;top:168px;width:1px;height:19px;background:#d3d1d0"></div>
<div style="left:595px;top:168px;width:1px;height:19px;background:#d3d1d0"></div>
<div style="left:645px;top:168px;width:1px;height:19px;background:#d3d1d0"></div>
<div style="left:705px;top:168px;width:1px;height:19px;background:#d3d1d0"></div>
<div style="left:251px;top:187px;width:15px;height:19px;background:linear-gradient(90deg,#fff 35%,#e9e9ee);border-bottom:1px solid #e2e2e2"></div>
<div style="left:266px;top:187px;width:440px;height:19px;background:#d8d6d8;border-bottom:1px solid #d3d1d0"></div>
<div class="t" style="left:266px;top:187px;width:29px;height:19px;line-height:19px;">2</div>
<div class="t" style="left:295px;top:187px;width:50px;height:19px;line-height:19px;">61</div>
<div class="t" style="left:345px;top:187px;width:100px;height:19px;line-height:19px;">0.1116</div>
<div class="t" style="left:445px;top:187px;width:50px;height:19px;line-height:19px;">0.003</div>
<div class="t" style="left:495px;top:187px;width:50px;height:19px;line-height:19px;">3.7</div>
<div class="t" style="left:545px;top:187px;width:50px;height:19px;line-height:19px;">91</div>
<div class="t" style="left:595px;top:187px;width:50px;height:19px;line-height:19px;">5.3</div>
<div class="t" style="left:645px;top:187px;width:61px;height:19px;line-height:19px;">0.9897</div>
<div style="left:295px;top:187px;width:1px;height:19px;background:#d3d1d0"></div>
<div style="left:345px;top:187px;width:1px;height:19px;background:#d3d1d0"></div>
<div style="left:445px;top:187px;width:1px;height:19px;background:#d3d1d0"></div>
<div style="left:495px;top:187px;width:1px;height:19px;background:#d3d1d0"></div>
<div style="left:545px;top:187px;width:1px;height:19px;background:#d3d1d0"></div>
<div style="left:595px;top:187px;width:1px;height:19px;background:#d3d1d0"></div>
<div style="left:645px;top:187px;width:1px;height:19px;background:#d3d1d0"></div>
<div style="left:705px;top:187px;width:1px;height:19px;background:#d3d1d0"></div>
<div style="left:251px;top:206px;width:15px;height:19px;background:linear-gradient(90deg,#fff 35%,#e9e9ee);border-bottom:1px solid #e2e2e2"></div>
<div style="left:266px;top:206px;width:440px;height:19px;background:#e8e3df;border-bottom:1px solid #d3d1d0"></div>
<div class="t" style="left:266px;top:206px;width:29px;height:19px;line-height:19px;">3</div>
<div class="t" style="left:295px;top:206px;width:50px;height:19px;line-height:19px;">62</div>
<div class="t" style="left:345px;top:206px;width:100px;height:19px;line-height:19px;">0.1148</div>
<div class="t" style="left:445px;top:206px;width:50px;height:19px;line-height:19px;">0.0032</div>
<div class="t" style="left:495px;top:206px;width:50px;height:19px;line-height:19px;">3.7</div>
<div class="t" style="left:545px;top:206px;width:50px;height:19px;line-height:19px;">89.7</div>
<div class="t" style="left:595px;top:206px;width:50px;height:19px;line-height:19px;">6.6</div>
<div class="t" style="left:645px;top:206px;width:61px;height:19px;line-height:19px;">0.991</div>
<div style="left:295px;top:206px;width:1px;height:19px;background:#d3d1d0"></div>
<div style="left:345px;top:206px;width:1px;height:19px;background:#d3d1d0"></div>
<div style="left:445px;top:206px;width:1px;height:19px;background:#d3d1d0"></div>
<div style="left:495px;top:206px;width:1px;height:19px;background:#d3d1d0"></div>
<div style="left:545px;top:206px;width:1px;height:19px;background:#d3d1d0"></div>
<div style="left:595px;top:206px;width:1px;height:19px;background:#d3d1d0"></div>
<div style="left:645px;top:206px;width:1px;height:19px;background:#d3d1d0"></div>
<div style="left:705px;top:206px;width:1px;height:19px;background:#d3d1d0"></div>
<div style="left:251px;top:225px;width:15px;height:19px;background:linear-gradient(90deg,#fff 35%,#e9e9ee);border-bottom:1px solid #e2e2e2"></div>
<div style="left:266px;top:225px;width:440px;height:19px;background:#d8d6d8;border-bottom:1px solid #d3d1d0"></div>
<div class="t" style="left:266px;top:225px;width:29px;height:19px;line-height:19px;">4</div>
<div class="t" style="left:295px;top:225px;width:50px;height:19px;line-height:19px;">63</div>
<div class="t" style="left:345px;top:225px;width:100px;height:19px;line-height:19px;">0.118</div>
<div class="t" style="left:445px;top:225px;width:50px;height:19px;line-height:19px;">0.0033</div>
<div class="t" style="left:495px;top:225px;width:50px;height:19px;line-height:19px;">3.7</div>
<div class="t" style="left:545px;top:225px;width:50px;height:19px;line-height:19px;">88.5</div>
<div class="t" style="left:595px;top:225px;width:50px;height:19px;line-height:19px;">7.8</div>
<div class="t" style="left:645px;top:225px;width:61px;height:19px;line-height:19px;">0.9935</div>
<div style="left:295px;top:225px;width:1px;height:19px;background:#d3d1d0"></div>
<div style="left:345px;top:225px;width:1px;height:19px;background:#d3d1d0"></div>
<div style="left:445px;top:225px;width:1px;height:19px;background:#d3d1d0"></div>
<div style="left:495px;top:225px;width:1px;height:19px;background:#d3d1d0"></div>
<div style="left:545px;top:225px;width:1px;height:19px;background:#d3d1d0"></div>
<div style="left:595px;top:225px;width:1px;height:19px;background:#d3d1d0"></div>
<div style="left:645px;top:225px;width:1px;height:19px;background:#d3d1d0"></div>
<div style="left:705px;top:225px;width:1px;height:19px;background:#d3d1d0"></div>
<div style="left:251px;top:244px;width:15px;height:19px;background:linear-gradient(90deg,#fff 35%,#e9e9ee);border-bottom:1px solid #e2e2e2"></div>
<div style="left:266px;top:244px;width:440px;height:19px;background:#e8e3df;border-bottom:1px solid #d3d1d0"></div>
<div class="t" style="left:266px;top:244px;width:29px;height:19px;line-height:19px;">5</div>
<div class="t" style="left:295px;top:244px;width:50px;height:19px;line-height:19px;">64</div>
<div class="t" style="left:345px;top:244px;width:100px;height:19px;line-height:19px;">0.1212</div>
<div class="t" style="left:445px;top:244px;width:50px;height:19px;line-height:19px;">0.0035</div>
<div class="t" style="left:495px;top:244px;width:50px;height:19px;line-height:19px;">3.7</div>
<div class="t" style="left:545px;top:244px;width:50px;height:19px;line-height:19px;">87.3</div>
<div class="t" style="left:595px;top:244px;width:50px;height:19px;line-height:19px;">8.9</div>
<div class="t" style="left:645px;top:244px;width:61px;height:19px;line-height:19px;">0.9941</div>
<div style="left:295px;top:244px;width:1px;height:19px;background:#d3d1d0"></div>
<div style="left:345px;top:244px;width:1px;height:19px;background:#d3d1d0"></div>
<div style="left:445px;top:244px;width:1px;height:19px;background:#d3d1d0"></div>
<div style="left:495px;top:244px;width:1px;height:19px;background:#d3d1d0"></div>
<div style="left:545px;top:244px;width:1px;height:19px;background:#d3d1d0"></div>
<div style="left:595px;top:244px;width:1px;height:19px;background:#d3d1d0"></div>
<div style="left:645px;top:244px;width:1px;height:19px;background:#d3d1d0"></div>
<div style="left:705px;top:244px;width:1px;height:19px;background:#d3d1d0"></div>
<div style="left:251px;top:263px;width:15px;height:19px;background:linear-gradient(90deg,#fff 35%,#e9e9ee);border-bottom:1px solid #e2e2e2"></div>
<div style="left:266px;top:263px;width:440px;height:19px;background:#d8d6d8;border-bottom:1px solid #d3d1d0"></div>
<div class="t" style="left:266px;top:263px;width:29px;height:19px;line-height:19px;">6</div>
<div class="t" style="left:295px;top:263px;width:50px;height:19px;line-height:19px;">65</div>
<div class="t" style="left:345px;top:263px;width:100px;height:19px;line-height:19px;">0.1243</div>
<div class="t" style="left:445px;top:263px;width:50px;height:19px;line-height:19px;">0.0036</div>
<div class="t" style="left:495px;top:263px;width:50px;height:19px;line-height:19px;">3.7</div>
<div class="t" style="left:545px;top:263px;width:50px;height:19px;line-height:19px;">86.2</div>
<div class="t" style="left:595px;top:263px;width:50px;height:19px;line-height:19px;">10</div>
<div class="t" style="left:645px;top:263px;width:61px;height:19px;line-height:19px;">0.9958</div>
<div style="left:295px;top:263px;width:1px;height:19px;background:#d3d1d0"></div>
<div style="left:345px;top:263px;width:1px;height:19px;background:#d3d1d0"></div>
<div style="left:445px;top:263px;width:1px;height:19px;background:#d3d1d0"></div>
<div style="left:495px;top:263px;width:1px;height:19px;background:#d3d1d0"></div>
<div style="left:545px;top:263px;width:1px;height:19px;background:#d3d1d0"></div>
<div style="left:595px;top:263px;width:1px;height:19px;background:#d3d1d0"></div>
<div style="left:645px;top:263px;width:1px;height:19px;background:#d3d1d0"></div>
<div style="left:705px;top:263px;width:1px;height:19px;background:#d3d1d0"></div>
<div style="left:251px;top:282px;width:15px;height:19px;background:linear-gradient(90deg,#fff 35%,#e9e9ee);border-bottom:1px solid #e2e2e2"></div>
<div style="left:266px;top:282px;width:440px;height:19px;background:#e8e3df;border-bottom:1px solid #d3d1d0"></div>
<div class="t" style="left:266px;top:282px;width:29px;height:19px;line-height:19px;">7</div>
<div class="t" style="left:295px;top:282px;width:50px;height:19px;line-height:19px;">66</div>
<div class="t" style="left:345px;top:282px;width:100px;height:19px;line-height:19px;">0.1274</div>
<div class="t" style="left:445px;top:282px;width:50px;height:19px;line-height:19px;">0.0036</div>
<div class="t" style="left:495px;top:282px;width:50px;height:19px;line-height:19px;">3.7</div>
<div class="t" style="left:545px;top:282px;width:50px;height:19px;line-height:19px;">85.2</div>
<div class="t" style="left:595px;top:282px;width:50px;height:19px;line-height:19px;">11.1</div>
<div class="t" style="left:645px;top:282px;width:61px;height:19px;line-height:19px;">0.9971</div>
<div style="left:295px;top:282px;width:1px;height:19px;background:#d3d1d0"></div>
<div style="left:345px;top:282px;width:1px;height:19px;background:#d3d1d0"></div>
<div style="left:445px;top:282px;width:1px;height:19px;background:#d3d1d0"></div>
<div style="left:495px;top:282px;width:1px;height:19px;background:#d3d1d0"></div>
<div style="left:545px;top:282px;width:1px;height:19px;background:#d3d1d0"></div>
<div style="left:595px;top:282px;width:1px;height:19px;background:#d3d1d0"></div>
<div style="left:645px;top:282px;width:1px;height:19px;background:#d3d1d0"></div>
<div style="left:705px;top:282px;width:1px;height:19px;background:#d3d1d0"></div>
<div style="left:251px;top:301px;width:15px;height:19px;background:linear-gradient(90deg,#fff 35%,#e9e9ee);border-bottom:1px solid #e2e2e2"></div>
<div style="left:266px;top:301px;width:440px;height:19px;background:#d8d6d8;border-bottom:1px solid #d3d1d0"></div>
<div class="t" style="left:266px;top:301px;width:29px;height:19px;line-height:19px;">8</div>
<div class="t" style="left:295px;top:301px;width:50px;height:19px;line-height:19px;">67</div>
<div class="t" style="left:345px;top:301px;width:100px;height:19px;line-height:19px;">0.1304</div>
<div class="t" style="left:445px;top:301px;width:50px;height:19px;line-height:19px;">0.0038</div>
<div class="t" style="left:495px;top:301px;width:50px;height:19px;line-height:19px;">3.7</div>
<div class="t" style="left:545px;top:301px;width:50px;height:19px;line-height:19px;">84.2</div>
<div class="t" style="left:595px;top:301px;width:50px;height:19px;line-height:19px;">12.1</div>
<div class="t" style="left:645px;top:301px;width:61px;height:19px;line-height:19px;">0.9972</div>
<div style="left:295px;top:301px;width:1px;height:19px;background:#d3d1d0"></div>
<div style="left:345px;top:301px;width:1px;height:19px;background:#d3d1d0"></div>
<div style="left:445px;top:301px;width:1px;height:19px;background:#d3d1d0"></div>
<div style="left:495px;top:301px;width:1px;height:19px;background:#d3d1d0"></div>
<div style="left:545px;top:301px;width:1px;height:19px;background:#d3d1d0"></div>
<div style="left:595px;top:301px;width:1px;height:19px;background:#d3d1d0"></div>
<div style="left:645px;top:301px;width:1px;height:19px;background:#d3d1d0"></div>
<div style="left:705px;top:301px;width:1px;height:19px;background:#d3d1d0"></div>
<div style="left:251px;top:320px;width:15px;height:19px;background:linear-gradient(90deg,#fff 35%,#e9e9ee);border-bottom:1px solid #e2e2e2"></div>
<div style="left:266px;top:320px;width:440px;height:19px;background:#e8e3df;border-bottom:1px solid #d3d1d0"></div>
<div class="t" style="left:266px;top:320px;width:29px;height:19px;line-height:19px;">9</div>
<div class="t" style="left:295px;top:320px;width:50px;height:19px;line-height:19px;">68</div>
<div class="t" style="left:345px;top:320px;width:100px;height:19px;line-height:19px;">0.1334</div>
<div class="t" style="left:445px;top:320px;width:50px;height:19px;line-height:19px;">0.0039</div>
<div class="t" style="left:495px;top:320px;width:50px;height:19px;line-height:19px;">3.7</div>
<div class="t" style="left:545px;top:320px;width:50px;height:19px;line-height:19px;">83.3</div>
<div class="t" style="left:595px;top:320px;width:50px;height:19px;line-height:19px;">13</div>
<div class="t" style="left:645px;top:320px;width:61px;height:19px;line-height:19px;">0.998</div>
<div style="left:295px;top:320px;width:1px;height:19px;background:#d3d1d0"></div>
<div style="left:345px;top:320px;width:1px;height:19px;background:#d3d1d0"></div>
<div style="left:445px;top:320px;width:1px;height:19px;background:#d3d1d0"></div>
<div style="left:495px;top:320px;width:1px;height:19px;background:#d3d1d0"></div>
<div style="left:545px;top:320px;width:1px;height:19px;background:#d3d1d0"></div>
<div style="left:595px;top:320px;width:1px;height:19px;background:#d3d1d0"></div>
<div style="left:645px;top:320px;width:1px;height:19px;background:#d3d1d0"></div>
<div style="left:705px;top:320px;width:1px;height:19px;background:#d3d1d0"></div>
<div style="left:251px;top:339px;width:15px;height:19px;background:linear-gradient(90deg,#fff 35%,#e9e9ee);border-bottom:1px solid #e2e2e2"></div>
<div style="left:266px;top:339px;width:440px;height:19px;background:#d8d6d8;border-bottom:1px solid #d3d1d0"></div>
<div class="t" style="left:266px;top:339px;width:29px;height:19px;line-height:19px;">10</div>
<div class="t" style="left:295px;top:339px;width:50px;height:19px;line-height:19px;">69</div>
<div class="t" style="left:345px;top:339px;width:100px;height:19px;line-height:19px;">0.1362</div>
<div class="t" style="left:445px;top:339px;width:50px;height:19px;line-height:19px;">0.0039</div>
<div class="t" style="left:495px;top:339px;width:50px;height:19px;line-height:19px;">3.7</div>
<div class="t" style="left:545px;top:339px;width:50px;height:19px;line-height:19px;">82.4</div>
<div class="t" style="left:595px;top:339px;width:50px;height:19px;line-height:19px;">13.9</div>
<div class="t" style="left:645px;top:339px;width:61px;height:19px;line-height:19px;">0.9987</div>
<div style="left:295px;top:339px;width:1px;height:19px;background:#d3d1d0"></div>
<div style="left:345px;top:339px;width:1px;height:19px;background:#d3d1d0"></div>
<div style="left:445px;top:339px;width:1px;height:19px;background:#d3d1d0"></div>
<div style="left:495px;top:339px;width:1px;height:19px;background:#d3d1d0"></div>
<div style="left:545px;top:339px;width:1px;height:19px;background:#d3d1d0"></div>
<div style="left:595px;top:339px;width:1px;height:19px;background:#d3d1d0"></div>
<div style="left:645px;top:339px;width:1px;height:19px;background:#d3d1d0"></div>
<div style="left:705px;top:339px;width:1px;height:19px;background:#d3d1d0"></div>
<div style="left:251px;top:358px;width:15px;height:19px;background:linear-gradient(90deg,#fff 35%,#e9e9ee);border-bottom:1px solid #e2e2e2"></div>
<div style="left:266px;top:358px;width:440px;height:19px;background:#e8e3df;border-bottom:1px solid #d3d1d0"></div>
<div class="t" style="left:266px;top:358px;width:29px;height:19px;line-height:19px;">11</div>
<div class="t" style="left:295px;top:358px;width:50px;height:19px;line-height:19px;">70</div>
<div class="t" style="left:345px;top:358px;width:100px;height:19px;line-height:19px;">0.139</div>
<div class="t" style="left:445px;top:358px;width:50px;height:19px;line-height:19px;">0.004</div>
<div class="t" style="left:495px;top:358px;width:50px;height:19px;line-height:19px;">3.7</div>
<div class="t" style="left:545px;top:358px;width:50px;height:19px;line-height:19px;">81.6</div>
<div class="t" style="left:595px;top:358px;width:50px;height:19px;line-height:19px;">14.7</div>
<div class="t" style="left:645px;top:358px;width:61px;height:19px;line-height:19px;">0.9991</div>
<div style="left:295px;top:358px;width:1px;height:19px;background:#d3d1d0"></div>
<div style="left:345px;top:358px;width:1px;height:19px;background:#d3d1d0"></div>
<div style="left:445px;top:358px;width:1px;height:19px;background:#d3d1d0"></div>
<div style="left:495px;top:358px;width:1px;height:19px;background:#d3d1d0"></div>
<div style="left:545px;top:358px;width:1px;height:19px;background:#d3d1d0"></div>
<div style="left:595px;top:358px;width:1px;height:19px;background:#d3d1d0"></div>
<div style="left:645px;top:358px;width:1px;height:19px;background:#d3d1d0"></div>
<div style="left:705px;top:358px;width:1px;height:19px;background:#d3d1d0"></div>
<div style="left:251px;top:377px;width:15px;height:19px;background:linear-gradient(90deg,#fff 35%,#e9e9ee);border-bottom:1px solid #e2e2e2"></div>
<div style="left:266px;top:377px;width:440px;height:19px;background:#d8d6d8;border-bottom:1px solid #d3d1d0"></div>
<div class="t" style="left:266px;top:377px;width:29px;height:19px;line-height:19px;">12</div>
<div class="t" style="left:295px;top:377px;width:50px;height:19px;line-height:19px;">71</div>
<div class="t" style="left:345px;top:377px;width:100px;height:19px;line-height:19px;">0.1416</div>
<div class="t" style="left:445px;top:377px;width:50px;height:19px;line-height:19px;">0.0041</div>
<div class="t" style="left:495px;top:377px;width:50px;height:19px;line-height:19px;">3.7</div>
<div class="t" style="left:545px;top:377px;width:50px;height:19px;line-height:19px;">80.8</div>
<div class="t" style="left:595px;top:377px;width:50px;height:19px;line-height:19px;">15.4</div>
<div class="t" style="left:645px;top:377px;width:61px;height:19px;line-height:19px;">0.9994</div>
<div style="left:295px;top:377px;width:1px;height:19px;background:#d3d1d0"></div>
<div style="left:345px;top:377px;width:1px;height:19px;background:#d3d1d0"></div>
<div style="left:445px;top:377px;width:1px;height:19px;background:#d3d1d0"></div>
<div style="left:495px;top:377px;width:1px;height:19px;background:#d3d1d0"></div>
<div style="left:545px;top:377px;width:1px;height:19px;background:#d3d1d0"></div>
<div style="left:595px;top:377px;width:1px;height:19px;background:#d3d1d0"></div>
<div style="left:645px;top:377px;width:1px;height:19px;background:#d3d1d0"></div>
<div style="left:705px;top:377px;width:1px;height:19px;background:#d3d1d0"></div>
<div style="left:251px;top:396px;width:15px;height:19px;background:linear-gradient(90deg,#fff 35%,#e9e9ee);border-bottom:1px solid #e2e2e2"></div>
<div style="left:266px;top:396px;width:440px;height:19px;background:#e8e3df;border-bottom:1px solid #d3d1d0"></div>
<div class="t" style="left:266px;top:396px;width:29px;height:19px;line-height:19px;">13</div>
<div class="t" style="left:295px;top:396px;width:50px;height:19px;line-height:19px;">72</div>
<div class="t" style="left:345px;top:396px;width:100px;height:19px;line-height:19px;">0.1441</div>
<div class="t" style="left:445px;top:396px;width:50px;height:19px;line-height:19px;">0.0041</div>
<div class="t" style="left:495px;top:396px;width:50px;height:19px;line-height:19px;">3.7</div>
<div class="t" style="left:545px;top:396px;width:50px;height:19px;line-height:19px;">80.2</div>
<div class="t" style="left:595px;top:396px;width:50px;height:19px;line-height:19px;">16.1</div>
<div class="t" style="left:645px;top:396px;width:61px;height:19px;line-height:19px;">0.9995</div>
<div style="left:295px;top:396px;width:1px;height:19px;background:#d3d1d0"></div>
<div style="left:345px;top:396px;width:1px;height:19px;background:#d3d1d0"></div>
<div style="left:445px;top:396px;width:1px;height:19px;background:#d3d1d0"></div>
<div style="left:495px;top:396px;width:1px;height:19px;background:#d3d1d0"></div>
<div style="left:545px;top:396px;width:1px;height:19px;background:#d3d1d0"></div>
<div style="left:595px;top:396px;width:1px;height:19px;background:#d3d1d0"></div>
<div style="left:645px;top:396px;width:1px;height:19px;background:#d3d1d0"></div>
<div style="left:705px;top:396px;width:1px;height:19px;background:#d3d1d0"></div>
<div style="left:251px;top:415px;width:15px;height:19px;background:linear-gradient(90deg,#fff 35%,#e9e9ee);border-bottom:1px solid #e2e2e2"></div>
<div style="left:266px;top:415px;width:440px;height:19px;background:#d8d6d8;border-bottom:1px solid #d3d1d0"></div>
<div class="t" style="left:266px;top:415px;width:29px;height:19px;line-height:19px;">14</div>
<div class="t" style="left:295px;top:415px;width:50px;height:19px;line-height:19px;">73</div>
<div class="t" style="left:345px;top:415px;width:100px;height:19px;line-height:19px;">0.1464</div>
<div class="t" style="left:445px;top:415px;width:50px;height:19px;line-height:19px;">0.0042</div>
<div class="t" style="left:495px;top:415px;width:50px;height:19px;line-height:19px;">3.7</div>
<div class="t" style="left:545px;top:415px;width:50px;height:19px;line-height:19px;">79.5</div>
<div class="t" style="left:595px;top:415px;width:50px;height:19px;line-height:19px;">16.8</div>
<div class="t" style="left:645px;top:415px;width:61px;height:19px;line-height:19px;">0.9995</div>
<div style="left:295px;top:415px;width:1px;height:19px;background:#d3d1d0"></div>
<div style="left:345px;top:415px;width:1px;height:19px;background:#d3d1d0"></div>
<div style="left:445px;top:415px;width:1px;height:19px;background:#d3d1d0"></div>
<div style="left:495px;top:415px;width:1px;height:19px;background:#d3d1d0"></div>
<div style="left:545px;top:415px;width:1px;height:19px;background:#d3d1d0"></div>
<div style="left:595px;top:415px;width:1px;height:19px;background:#d3d1d0"></div>
<div style="left:645px;top:415px;width:1px;height:19px;background:#d3d1d0"></div>
<div style="left:705px;top:415px;width:1px;height:19px;background:#d3d1d0"></div>
<div style="left:251px;top:434px;width:15px;height:19px;background:linear-gradient(90deg,#fff 35%,#e9e9ee);border-bottom:1px solid #e2e2e2"></div>
<div style="left:266px;top:434px;width:440px;height:19px;background:#e8e3df;border-bottom:1px solid #d3d1d0"></div>
<div class="t" style="left:266px;top:434px;width:29px;height:19px;line-height:19px;">15</div>
<div class="t" style="left:295px;top:434px;width:50px;height:19px;line-height:19px;">74</div>
<div class="t" style="left:345px;top:434px;width:100px;height:19px;line-height:19px;">0.1486</div>
<div class="t" style="left:445px;top:434px;width:50px;height:19px;line-height:19px;">0.0042</div>
<div class="t" style="left:495px;top:434px;width:50px;height:19px;line-height:19px;">3.7</div>
<div class="t" style="left:545px;top:434px;width:50px;height:19px;line-height:19px;">78.9</div>
<div class="t" style="left:595px;top:434px;width:50px;height:19px;line-height:19px;">17.3</div>
<div class="t" style="left:645px;top:434px;width:61px;height:19px;line-height:19px;">0.9994</div>
<div style="left:295px;top:434px;width:1px;height:19px;background:#d3d1d0"></div>
<div style="left:345px;top:434px;width:1px;height:19px;background:#d3d1d0"></div>
<div style="left:445px;top:434px;width:1px;height:19px;background:#d3d1d0"></div>
<div style="left:495px;top:434px;width:1px;height:19px;background:#d3d1d0"></div>
<div style="left:545px;top:434px;width:1px;height:19px;background:#d3d1d0"></div>
<div style="left:595px;top:434px;width:1px;height:19px;background:#d3d1d0"></div>
<div style="left:645px;top:434px;width:1px;height:19px;background:#d3d1d0"></div>
<div style="left:705px;top:434px;width:1px;height:19px;background:#d3d1d0"></div>
<div style="left:251px;top:453px;width:15px;height:19px;background:linear-gradient(90deg,#fff 35%,#e9e9ee);border-bottom:1px solid #e2e2e2"></div>
<div style="left:266px;top:453px;width:440px;height:19px;background:#d8d6d8;border-bottom:1px solid #d3d1d0"></div>
<div class="t" style="left:266px;top:453px;width:29px;height:19px;line-height:19px;">16</div>
<div class="t" style="left:295px;top:453px;width:50px;height:19px;line-height:19px;">75</div>
<div class="t" style="left:345px;top:453px;width:100px;height:19px;line-height:19px;">0.1505</div>
<div class="t" style="left:445px;top:453px;width:50px;height:19px;line-height:19px;">0.0042</div>
<div class="t" style="left:495px;top:453px;width:50px;height:19px;line-height:19px;">3.7</div>
<div class="t" style="left:545px;top:453px;width:50px;height:19px;line-height:19px;">78.4</div>
<div class="t" style="left:595px;top:453px;width:50px;height:19px;line-height:19px;">17.8</div>
<div class="t" style="left:645px;top:453px;width:61px;height:19px;line-height:19px;">0.9992</div>
<div style="left:295px;top:453px;width:1px;height:19px;background:#d3d1d0"></div>
<div style="left:345px;top:453px;width:1px;height:19px;background:#d3d1d0"></div>
<div style="left:445px;top:453px;width:1px;height:19px;background:#d3d1d0"></div>
<div style="left:495px;top:453px;width:1px;height:19px;background:#d3d1d0"></div>
<div style="left:545px;top:453px;width:1px;height:19px;background:#d3d1d0"></div>
<div style="left:595px;top:453px;width:1px;height:19px;background:#d3d1d0"></div>
<div style="left:645px;top:453px;width:1px;height:19px;background:#d3d1d0"></div>
<div style="left:705px;top:453px;width:1px;height:19px;background:#d3d1d0"></div>
<div style="left:251px;top:472px;width:15px;height:19px;background:linear-gradient(90deg,#fff 35%,#e9e9ee);border-bottom:1px solid #e2e2e2"></div>
<div style="left:266px;top:472px;width:440px;height:19px;background:#e8e3df;border-bottom:1px solid #d3d1d0"></div>
<div class="t" style="left:266px;top:472px;width:29px;height:19px;line-height:19px;">17</div>
<div class="t" style="left:295px;top:472px;width:50px;height:19px;line-height:19px;">76</div>
<div class="t" style="left:345px;top:472px;width:100px;height:19px;line-height:19px;">0.1522</div>
<div class="t" style="left:445px;top:472px;width:50px;height:19px;line-height:19px;">0.0043</div>
<div class="t" style="left:495px;top:472px;width:50px;height:19px;line-height:19px;">3.7</div>
<div class="t" style="left:545px;top:472px;width:50px;height:19px;line-height:19px;">78</div>
<div class="t" style="left:595px;top:472px;width:50px;height:19px;line-height:19px;">18.3</div>
<div class="t" style="left:645px;top:472px;width:61px;height:19px;line-height:19px;">0.999</div>
<div style="left:295px;top:472px;width:1px;height:19px;background:#d3d1d0"></div>
<div style="left:345px;top:472px;width:1px;height:19px;background:#d3d1d0"></div>
<div style="left:445px;top:472px;width:1px;height:19px;background:#d3d1d0"></div>
<div style="left:495px;top:472px;width:1px;height:19px;background:#d3d1d0"></div>
<div style="left:545px;top:472px;width:1px;height:19px;background:#d3d1d0"></div>
<div style="left:595px;top:472px;width:1px;height:19px;background:#d3d1d0"></div>
<div style="left:645px;top:472px;width:1px;height:19px;background:#d3d1d0"></div>
<div style="left:705px;top:472px;width:1px;height:19px;background:#d3d1d0"></div>
<div style="left:251px;top:491px;width:15px;height:19px;background:linear-gradient(90deg,#fff 35%,#e9e9ee);border-bottom:1px solid #e2e2e2"></div>
<div style="left:266px;top:491px;width:440px;height:19px;background:#d8d6d8;border-bottom:1px solid #d3d1d0"></div>
<div class="t" style="left:266px;top:491px;width:29px;height:19px;line-height:19px;">18</div>
<div class="t" style="left:295px;top:491px;width:50px;height:19px;line-height:19px;">77</div>
<div class="t" style="left:345px;top:491px;width:100px;height:19px;line-height:19px;">0.1537</div>
<div class="t" style="left:445px;top:491px;width:50px;height:19px;line-height:19px;">0.0044</div>
<div class="t" style="left:495px;top:491px;width:50px;height:19px;line-height:19px;">3.7</div>
<div class="t" style="left:545px;top:491px;width:50px;height:19px;line-height:19px;">77.6</div>
<div class="t" style="left:595px;top:491px;width:50px;height:19px;line-height:19px;">18.7</div>
<div class="t" style="left:645px;top:491px;width:61px;height:19px;line-height:19px;">0.9989</div>
<div style="left:295px;top:491px;width:1px;height:19px;background:#d3d1d0"></div>
<div style="left:345px;top:491px;width:1px;height:19px;background:#d3d1d0"></div>
<div style="left:445px;top:491px;width:1px;height:19px;background:#d3d1d0"></div>
<div style="left:495px;top:491px;width:1px;height:19px;background:#d3d1d0"></div>
<div style="left:545px;top:491px;width:1px;height:19px;background:#d3d1d0"></div>
<div style="left:595px;top:491px;width:1px;height:19px;background:#d3d1d0"></div>
<div style="left:645px;top:491px;width:1px;height:19px;background:#d3d1d0"></div>
<div style="left:705px;top:491px;width:1px;height:19px;background:#d3d1d0"></div>
<div style="left:251px;top:510px;width:15px;height:19px;background:linear-gradient(90deg,#fff 35%,#e9e9ee);border-bottom:1px solid #e2e2e2"></div>
<div style="left:266px;top:510px;width:440px;height:19px;background:#e8e3df;border-bottom:1px solid #d3d1d0"></div>
<div class="t" style="left:266px;top:510px;width:29px;height:19px;line-height:19px;">19</div>
<div class="t" style="left:295px;top:510px;width:50px;height:19px;line-height:19px;">78</div>
<div class="t" style="left:345px;top:510px;width:100px;height:19px;line-height:19px;">0.1549</div>
<div class="t" style="left:445px;top:510px;width:50px;height:19px;line-height:19px;">0.0045</div>
<div class="t" style="left:495px;top:510px;width:50px;height:19px;line-height:19px;">3.7</div>
<div class="t" style="left:545px;top:510px;width:50px;height:19px;line-height:19px;">77.3</div>
<div class="t" style="left:595px;top:510px;width:50px;height:19px;line-height:19px;">19</div>
<div class="t" style="left:645px;top:510px;width:61px;height:19px;line-height:19px;">0.9988</div>
<div style="left:295px;top:510px;width:1px;height:19px;background:#d3d1d0"></div>
<div style="left:345px;top:510px;width:1px;height:19px;background:#d3d1d0"></div>
<div style="left:445px;top:510px;width:1px;height:19px;background:#d3d1d0"></div>
<div style="left:495px;top:510px;width:1px;height:19px;background:#d3d1d0"></div>
<div style="left:545px;top:510px;width:1px;height:19px;background:#d3d1d0"></div>
<div style="left:595px;top:510px;width:1px;height:19px;background:#d3d1d0"></div>
<div style="left:645px;top:510px;width:1px;height:19px;background:#d3d1d0"></div>
<div style="left:705px;top:510px;width:1px;height:19px;background:#d3d1d0"></div>
<div style="left:251px;top:529px;width:15px;height:19px;background:linear-gradient(90deg,#fff 35%,#e9e9ee);border-bottom:1px solid #e2e2e2"></div>
<div style="left:266px;top:529px;width:440px;height:19px;background:#d8d6d8;border-bottom:1px solid #d3d1d0"></div>
<div class="t" style="left:266px;top:529px;width:29px;height:19px;line-height:19px;">20</div>
<div class="t" style="left:295px;top:529px;width:50px;height:19px;line-height:19px;">79</div>
<div class="t" style="left:345px;top:529px;width:100px;height:19px;line-height:19px;">0.1558</div>
<div class="t" style="left:445px;top:529px;width:50px;height:19px;line-height:19px;">0.0045</div>
<div class="t" style="left:495px;top:529px;width:50px;height:19px;line-height:19px;">3.7</div>
<div class="t" style="left:545px;top:529px;width:50px;height:19px;line-height:19px;">77.1</div>
<div class="t" style="left:595px;top:529px;width:50px;height:19px;line-height:19px;">19.2</div>
<div class="t" style="left:645px;top:529px;width:61px;height:19px;line-height:19px;">0.9987</div>
<div style="left:295px;top:529px;width:1px;height:19px;background:#d3d1d0"></div>
<div style="left:345px;top:529px;width:1px;height:19px;background:#d3d1d0"></div>
<div style="left:445px;top:529px;width:1px;height:19px;background:#d3d1d0"></div>
<div style="left:495px;top:529px;width:1px;height:19px;background:#d3d1d0"></div>
<div style="left:545px;top:529px;width:1px;height:19px;background:#d3d1d0"></div>
<div style="left:595px;top:529px;width:1px;height:19px;background:#d3d1d0"></div>
<div style="left:645px;top:529px;width:1px;height:19px;background:#d3d1d0"></div>
<div style="left:705px;top:529px;width:1px;height:19px;background:#d3d1d0"></div>
<div style="left:251px;top:548px;width:15px;height:19px;background:linear-gradient(90deg,#fff 35%,#e9e9ee);border-bottom:1px solid #e2e2e2"></div>
<div style="left:266px;top:548px;width:440px;height:19px;background:#e8e3df;border-bottom:1px solid #d3d1d0"></div>
<div class="t" style="left:266px;top:548px;width:29px;height:19px;line-height:19px;">21</div>
<div class="t" style="left:295px;top:548px;width:50px;height:19px;line-height:19px;">80</div>
<div class="t" style="left:345px;top:548px;width:100px;height:19px;line-height:19px;">0.1564</div>
<div class="t" style="left:445px;top:548px;width:50px;height:19px;line-height:19px;">0.0045</div>
<div class="t" style="left:495px;top:548px;width:50px;height:19px;line-height:19px;">3.7</div>
<div class="t" style="left:545px;top:548px;width:50px;height:19px;line-height:19px;">77</div>
<div class="t" style="left:595px;top:548px;width:50px;height:19px;line-height:19px;">19.3</div>
<div class="t" style="left:645px;top:548px;width:61px;height:19px;line-height:19px;">0.9986</div>
<div style="left:295px;top:548px;width:1px;height:19px;background:#d3d1d0"></div>
<div style="left:345px;top:548px;width:1px;height:19px;background:#d3d1d0"></div>
<div style="left:445px;top:548px;width:1px;height:19px;background:#d3d1d0"></div>
<div style="left:495px;top:548px;width:1px;height:19px;background:#d3d1d0"></div>
<div style="left:545px;top:548px;width:1px;height:19px;background:#d3d1d0"></div>
<div style="left:595px;top:548px;width:1px;height:19px;background:#d3d1d0"></div>
<div style="left:645px;top:548px;width:1px;height:19px;background:#d3d1d0"></div>
<div style="left:705px;top:548px;width:1px;height:19px;background:#d3d1d0"></div>
<div style="left:251px;top:567px;width:15px;height:19px;background:linear-gradient(90deg,#fff 35%,#e9e9ee);border-bottom:1px solid #e2e2e2"></div>
<div style="left:266px;top:567px;width:440px;height:19px;background:#d8d6d8;border-bottom:1px solid #d3d1d0"></div>
<div class="t" style="left:266px;top:567px;width:29px;height:19px;line-height:19px;">22</div>
<div class="t" style="left:295px;top:567px;width:50px;height:19px;line-height:19px;">81</div>
<div class="t" style="left:345px;top:567px;width:100px;height:19px;line-height:19px;">0.1565</div>
<div class="t" style="left:445px;top:567px;width:50px;height:19px;line-height:19px;">0.0045</div>
<div class="t" style="left:495px;top:567px;width:50px;height:19px;line-height:19px;">3.7</div>
<div class="t" style="left:545px;top:567px;width:50px;height:19px;line-height:19px;">76.9</div>
<div class="t" style="left:595px;top:567px;width:50px;height:19px;line-height:19px;">19.4</div>
<div class="t" style="left:645px;top:567px;width:61px;height:19px;line-height:19px;">0.9986</div>
<div style="left:295px;top:567px;width:1px;height:19px;background:#d3d1d0"></div>
<div style="left:345px;top:567px;width:1px;height:19px;background:#d3d1d0"></div>
<div style="left:445px;top:567px;width:1px;height:19px;background:#d3d1d0"></div>
<div style="left:495px;top:567px;width:1px;height:19px;background:#d3d1d0"></div>
<div style="left:545px;top:567px;width:1px;height:19px;background:#d3d1d0"></div>
<div style="left:595px;top:567px;width:1px;height:19px;background:#d3d1d0"></div>
<div style="left:645px;top:567px;width:1px;height:19px;background:#d3d1d0"></div>
<div style="left:705px;top:567px;width:1px;height:19px;background:#d3d1d0"></div>
<div style="left:251px;top:586px;width:15px;height:19px;background:linear-gradient(90deg,#fff 35%,#e9e9ee);border-bottom:1px solid #e2e2e2"></div>
<div style="left:266px;top:586px;width:440px;height:19px;background:#e8e3df;border-bottom:1px solid #d3d1d0"></div>
<div class="t" style="left:266px;top:586px;width:29px;height:19px;line-height:19px;">23</div>
<div class="t" style="left:295px;top:586px;width:50px;height:19px;line-height:19px;">82</div>
<div class="t" style="left:345px;top:586px;width:100px;height:19px;line-height:19px;">0.1563</div>
<div class="t" style="left:445px;top:586px;width:50px;height:19px;line-height:19px;">0.0045</div>
<div class="t" style="left:495px;top:586px;width:50px;height:19px;line-height:19px;">3.7</div>
<div class="t" style="left:545px;top:586px;width:50px;height:19px;line-height:19px;">77</div>
<div class="t" style="left:595px;top:586px;width:50px;height:19px;line-height:19px;">19.3</div>
<div class="t" style="left:645px;top:586px;width:61px;height:19px;line-height:19px;">0.9986</div>
<div style="left:295px;top:586px;width:1px;height:19px;background:#d3d1d0"></div>
<div style="left:345px;top:586px;width:1px;height:19px;background:#d3d1d0"></div>
<div style="left:445px;top:586px;width:1px;height:19px;background:#d3d1d0"></div>
<div style="left:495px;top:586px;width:1px;height:19px;background:#d3d1d0"></div>
<div style="left:545px;top:586px;width:1px;height:19px;background:#d3d1d0"></div>
<div style="left:595px;top:586px;width:1px;height:19px;background:#d3d1d0"></div>
<div style="left:645px;top:586px;width:1px;height:19px;background:#d3d1d0"></div>
<div style="left:705px;top:586px;width:1px;height:19px;background:#d3d1d0"></div>
<div style="left:251px;top:605px;width:15px;height:19px;background:linear-gradient(90deg,#fff 35%,#e9e9ee);border-bottom:1px solid #e2e2e2"></div>
<div style="left:266px;top:605px;width:440px;height:19px;background:#d8d6d8;border-bottom:1px solid #d3d1d0"></div>
<div class="t" style="left:266px;top:605px;width:29px;height:19px;line-height:19px;">24</div>
<div class="t" style="left:295px;top:605px;width:50px;height:19px;line-height:19px;">83</div>
<div class="t" style="left:345px;top:605px;width:100px;height:19px;line-height:19px;">0.1555</div>
<div class="t" style="left:445px;top:605px;width:50px;height:19px;line-height:19px;">0.0045</div>
<div class="t" style="left:495px;top:605px;width:50px;height:19px;line-height:19px;">3.7</div>
<div class="t" style="left:545px;top:605px;width:50px;height:19px;line-height:19px;">77.2</div>
<div class="t" style="left:595px;top:605px;width:50px;height:19px;line-height:19px;">19.1</div>
<div class="t" style="left:645px;top:605px;width:61px;height:19px;line-height:19px;">0.9987</div>
<div style="left:295px;top:605px;width:1px;height:19px;background:#d3d1d0"></div>
<div style="left:345px;top:605px;width:1px;height:19px;background:#d3d1d0"></div>
<div style="left:445px;top:605px;width:1px;height:19px;background:#d3d1d0"></div>
<div style="left:495px;top:605px;width:1px;height:19px;background:#d3d1d0"></div>
<div style="left:545px;top:605px;width:1px;height:19px;background:#d3d1d0"></div>
<div style="left:595px;top:605px;width:1px;height:19px;background:#d3d1d0"></div>
<div style="left:645px;top:605px;width:1px;height:19px;background:#d3d1d0"></div>
<div style="left:705px;top:605px;width:1px;height:19px;background:#d3d1d0"></div>
<div style="left:251px;top:624px;width:15px;height:19px;background:linear-gradient(90deg,#fff 35%,#e9e9ee);border-bottom:1px solid #e2e2e2"></div>
<div style="left:266px;top:624px;width:440px;height:19px;background:#e8e3df;border-bottom:1px solid #d3d1d0"></div>
<div class="t" style="left:266px;top:624px;width:29px;height:19px;line-height:19px;">25</div>
<div class="t" style="left:295px;top:624px;width:50px;height:19px;line-height:19px;">84</div>
<div class="t" style="left:345px;top:624px;width:100px;height:19px;line-height:19px;">0.1543</div>
<div class="t" style="left:445px;top:624px;width:50px;height:19px;line-height:19px;">0.0045</div>
<div class="t" style="left:495px;top:624px;width:50px;height:19px;line-height:19px;">3.7</div>
<div class="t" style="left:545px;top:624px;width:50px;height:19px;line-height:19px;">77.5</div>
<div class="t" style="left:595px;top:624px;width:50px;height:19px;line-height:19px;">18.8</div>
<div class="t" style="left:645px;top:624px;width:61px;height:19px;line-height:19px;">0.9988</div>
<div style="left:295px;top:624px;width:1px;height:19px;background:#d3d1d0"></div>
<div style="left:345px;top:624px;width:1px;height:19px;background:#d3d1d0"></div>
<div style="left:445px;top:624px;width:1px;height:19px;background:#d3d1d0"></div>
<div style="left:495px;top:624px;width:1px;height:19px;background:#d3d1d0"></div>
<div style="left:545px;top:624px;width:1px;height:19px;background:#d3d1d0"></div>
<div style="left:595px;top:624px;width:1px;height:19px;background:#d3d1d0"></div>
<div style="left:645px;top:624px;width:1px;height:19px;background:#d3d1d0"></div>
<div style="left:705px;top:624px;width:1px;height:19px;background:#d3d1d0"></div>
<div style="left:251px;top:643px;width:15px;height:19px;background:linear-gradient(90deg,#fff 35%,#e9e9ee);border-bottom:1px solid #e2e2e2"></div>
<div style="left:266px;top:643px;width:440px;height:19px;background:#d8d6d8;border-bottom:1px solid #d3d1d0"></div>
<div class="t" style="left:266px;top:643px;width:29px;height:19px;line-height:19px;">26</div>
<div class="t" style="left:295px;top:643px;width:50px;height:19px;line-height:19px;">85</div>
<div class="t" style="left:345px;top:643px;width:100px;height:19px;line-height:19px;">0.1524</div>
<div class="t" style="left:445px;top:643px;width:50px;height:19px;line-height:19px;">0.0043</div>
<div class="t" style="left:495px;top:643px;width:50px;height:19px;line-height:19px;">3.7</div>
<div class="t" style="left:545px;top:643px;width:50px;height:19px;line-height:19px;">77.9</div>
<div class="t" style="left:595px;top:643px;width:50px;height:19px;line-height:19px;">18.3</div>
<div class="t" style="left:645px;top:643px;width:61px;height:19px;line-height:19px;">0.9989</div>
<div style="left:295px;top:643px;width:1px;height:19px;background:#d3d1d0"></div>
<div style="left:345px;top:643px;width:1px;height:19px;background:#d3d1d0"></div>
<div style="left:445px;top:643px;width:1px;height:19px;background:#d3d1d0"></div>
<div style="left:495px;top:643px;width:1px;height:19px;background:#d3d1d0"></div>
<div style="left:545px;top:643px;width:1px;height:19px;background:#d3d1d0"></div>
<div style="left:595px;top:643px;width:1px;height:19px;background:#d3d1d0"></div>
<div style="left:645px;top:643px;width:1px;height:19px;background:#d3d1d0"></div>
<div style="left:705px;top:643px;width:1px;height:19px;background:#d3d1d0"></div>
<div style="left:251px;top:662px;width:15px;height:19px;background:linear-gradient(90deg,#fff 35%,#e9e9ee);border-bottom:1px solid #e2e2e2"></div>
<div style="left:266px;top:662px;width:440px;height:19px;background:#e8e3df;border-bottom:1px solid #d3d1d0"></div>
<div class="t" style="left:266px;top:662px;width:29px;height:19px;line-height:19px;">27</div>
<div class="t" style="left:295px;top:662px;width:50px;height:19px;line-height:19px;">86</div>
<div class="t" style="left:345px;top:662px;width:100px;height:19px;line-height:19px;">0.1499</div>
<div class="t" style="left:445px;top:662px;width:50px;height:19px;line-height:19px;">0.0042</div>
<div class="t" style="left:495px;top:662px;width:50px;height:19px;line-height:19px;">3.7</div>
<div class="t" style="left:545px;top:662px;width:50px;height:19px;line-height:19px;">78.6</div>
<div class="t" style="left:595px;top:662px;width:50px;height:19px;line-height:19px;">17.7</div>
<div class="t" style="left:645px;top:662px;width:61px;height:19px;line-height:19px;">0.9992</div>
<div style="left:295px;top:662px;width:1px;height:19px;background:#d3d1d0"></div>
<div style="left:345px;top:662px;width:1px;height:19px;background:#d3d1d0"></div>
<div style="left:445px;top:662px;width:1px;height:19px;background:#d3d1d0"></div>
<div style="left:495px;top:662px;width:1px;height:19px;background:#d3d1d0"></div>
<div style="left:545px;top:662px;width:1px;height:19px;background:#d3d1d0"></div>
<div style="left:595px;top:662px;width:1px;height:19px;background:#d3d1d0"></div>
<div style="left:645px;top:662px;width:1px;height:19px;background:#d3d1d0"></div>
<div style="left:705px;top:662px;width:1px;height:19px;background:#d3d1d0"></div>
<div style="left:251px;top:681px;width:15px;height:19px;background:linear-gradient(90deg,#fff 35%,#e9e9ee);border-bottom:1px solid #e2e2e2"></div>
<div style="left:266px;top:681px;width:440px;height:19px;background:#d8d6d8;border-bottom:1px solid #d3d1d0"></div>
<div class="t" style="left:266px;top:681px;width:29px;height:19px;line-height:19px;">28</div>
<div class="t" style="left:295px;top:681px;width:50px;height:19px;line-height:19px;">87</div>
<div class="t" style="left:345px;top:681px;width:100px;height:19px;line-height:19px;">0.1467</div>
<div class="t" style="left:445px;top:681px;width:50px;height:19px;line-height:19px;">0.0042</div>
<div class="t" style="left:495px;top:681px;width:50px;height:19px;line-height:19px;">3.7</div>
<div class="t" style="left:545px;top:681px;width:50px;height:19px;line-height:19px;">79.4</div>
<div class="t" style="left:595px;top:681px;width:50px;height:19px;line-height:19px;">16.8</div>
<div class="t" style="left:645px;top:681px;width:61px;height:19px;line-height:19px;">0.9995</div>
<div style="left:295px;top:681px;width:1px;height:19px;background:#d3d1d0"></div>
<div style="left:345px;top:681px;width:1px;height:19px;background:#d3d1d0"></div>
<div style="left:445px;top:681px;width:1px;height:19px;background:#d3d1d0"></div>
<div style="left:495px;top:681px;width:1px;height:19px;background:#d3d1d0"></div>
<div style="left:545px;top:681px;width:1px;height:19px;background:#d3d1d0"></div>
<div style="left:595px;top:681px;width:1px;height:19px;background:#d3d1d0"></div>
<div style="left:645px;top:681px;width:1px;height:19px;background:#d3d1d0"></div>
<div style="left:705px;top:681px;width:1px;height:19px;background:#d3d1d0"></div>
<div style="left:251px;top:700px;width:15px;height:19px;background:linear-gradient(90deg,#fff 35%,#e9e9ee);border-bottom:1px solid #e2e2e2"></div>
<div style="left:266px;top:700px;width:440px;height:19px;background:#e8e3df;border-bottom:1px solid #d3d1d0"></div>
<div class="t" style="left:266px;top:700px;width:29px;height:19px;line-height:19px;">29</div>
<div class="t" style="left:295px;top:700px;width:50px;height:19px;line-height:19px;">88</div>
<div class="t" style="left:345px;top:700px;width:100px;height:19px;line-height:19px;">0.1448</div>
<div class="t" style="left:445px;top:700px;width:50px;height:19px;line-height:19px;">0.0041</div>
<div class="t" style="left:495px;top:700px;width:50px;height:19px;line-height:19px;">3.7</div>
<div class="t" style="left:545px;top:700px;width:50px;height:19px;line-height:19px;">80</div>
<div class="t" style="left:595px;top:700px;width:50px;height:19px;line-height:19px;">16.3</div>
<div class="t" style="left:645px;top:700px;width:61px;height:19px;line-height:19px;">0.9995</div>
<div style="left:295px;top:700px;width:1px;height:19px;background:#d3d1d0"></div>
<div style="left:345px;top:700px;width:1px;height:19px;background:#d3d1d0"></div>
<div style="left:445px;top:700px;width:1px;height:19px;background:#d3d1d0"></div>
<div style="left:495px;top:700px;width:1px;height:19px;background:#d3d1d0"></div>
<div style="left:545px;top:700px;width:1px;height:19px;background:#d3d1d0"></div>
<div style="left:595px;top:700px;width:1px;height:19px;background:#d3d1d0"></div>
<div style="left:645px;top:700px;width:1px;height:19px;background:#d3d1d0"></div>
<div style="left:705px;top:700px;width:1px;height:19px;background:#d3d1d0"></div>
<div style="left:251px;top:719px;width:15px;height:19px;background:linear-gradient(90deg,#fff 35%,#e9e9ee);border-bottom:1px solid #e2e2e2"></div>
<div style="left:266px;top:719px;width:440px;height:19px;background:#d8d6d8;border-bottom:1px solid #d3d1d0"></div>
<div class="t" style="left:266px;top:719px;width:29px;height:19px;line-height:19px;">30</div>
<div class="t" style="left:295px;top:719px;width:50px;height:19px;line-height:19px;">89</div>
<div class="t" style="left:345px;top:719px;width:100px;height:19px;line-height:19px;">0.1467</div>
<div class="t" style="left:445px;top:719px;width:50px;height:19px;line-height:19px;">0.0042</div>
<div class="t" style="left:495px;top:719px;width:50px;height:19px;line-height:19px;">3.7</div>
<div class="t" style="left:545px;top:719px;width:50px;height:19px;line-height:19px;">79.4</div>
<div class="t" style="left:595px;top:719px;width:50px;height:19px;line-height:19px;">16.8</div>
<div class="t" style="left:645px;top:719px;width:61px;height:19px;line-height:19px;">0.9995</div>
<div style="left:295px;top:719px;width:1px;height:19px;background:#d3d1d0"></div>
<div style="left:345px;top:719px;width:1px;height:19px;background:#d3d1d0"></div>
<div style="left:445px;top:719px;width:1px;height:19px;background:#d3d1d0"></div>
<div style="left:495px;top:719px;width:1px;height:19px;background:#d3d1d0"></div>
<div style="left:545px;top:719px;width:1px;height:19px;background:#d3d1d0"></div>
<div style="left:595px;top:719px;width:1px;height:19px;background:#d3d1d0"></div>
<div style="left:645px;top:719px;width:1px;height:19px;background:#d3d1d0"></div>
<div style="left:705px;top:719px;width:1px;height:19px;background:#d3d1d0"></div>
<div style="left:251px;top:738px;width:15px;height:19px;background:linear-gradient(90deg,#fff 35%,#e9e9ee);border-bottom:1px solid #e2e2e2"></div>
<div style="left:266px;top:738px;width:440px;height:19px;background:#e8e3df;border-bottom:1px solid #d3d1d0"></div>
<div class="t" style="left:266px;top:738px;width:29px;height:19px;line-height:19px;">31</div>
<div class="t" style="left:295px;top:738px;width:50px;height:19px;line-height:19px;">90</div>
<div class="t" style="left:345px;top:738px;width:100px;height:19px;line-height:19px;">0.1485</div>
<div class="t" style="left:445px;top:738px;width:50px;height:19px;line-height:19px;">0.0042</div>
<div class="t" style="left:495px;top:738px;width:50px;height:19px;line-height:19px;">3.7</div>
<div class="t" style="left:545px;top:738px;width:50px;height:19px;line-height:19px;">79</div>
<div class="t" style="left:595px;top:738px;width:50px;height:19px;line-height:19px;">17.3</div>
<div class="t" style="left:645px;top:738px;width:61px;height:19px;line-height:19px;">0.9994</div>
<div style="left:295px;top:738px;width:1px;height:19px;background:#d3d1d0"></div>
<div style="left:345px;top:738px;width:1px;height:19px;background:#d3d1d0"></div>
<div style="left:445px;top:738px;width:1px;height:19px;background:#d3d1d0"></div>
<div style="left:495px;top:738px;width:1px;height:19px;background:#d3d1d0"></div>
<div style="left:545px;top:738px;width:1px;height:19px;background:#d3d1d0"></div>
<div style="left:595px;top:738px;width:1px;height:19px;background:#d3d1d0"></div>
<div style="left:645px;top:738px;width:1px;height:19px;background:#d3d1d0"></div>
<div style="left:705px;top:738px;width:1px;height:19px;background:#d3d1d0"></div>
<div style="left:251px;top:757px;width:15px;height:19px;background:linear-gradient(90deg,#fff 35%,#e9e9ee);border-bottom:1px solid #e2e2e2"></div>
<div style="left:266px;top:757px;width:440px;height:19px;background:#d8d6d8;border-bottom:1px solid #d3d1d0"></div>
<div class="t" style="left:266px;top:757px;width:29px;height:19px;line-height:19px;">32</div>
<div class="t" style="left:295px;top:757px;width:50px;height:19px;line-height:19px;">91</div>
<div class="t" style="left:345px;top:757px;width:100px;height:19px;line-height:19px;">0.15</div>
<div class="t" style="left:445px;top:757px;width:50px;height:19px;line-height:19px;">0.0042</div>
<div class="t" style="left:495px;top:757px;width:50px;height:19px;line-height:19px;">3.7</div>
<div class="t" style="left:545px;top:757px;width:50px;height:19px;line-height:19px;">78.6</div>
<div class="t" style="left:595px;top:757px;width:50px;height:19px;line-height:19px;">17.7</div>
<div class="t" style="left:645px;top:757px;width:61px;height:19px;line-height:19px;">0.9992</div>
<div style="left:295px;top:757px;width:1px;height:19px;background:#d3d1d0"></div>
<div style="left:345px;top:757px;width:1px;height:19px;background:#d3d1d0"></div>
<div style="left:445px;top:757px;width:1px;height:19px;background:#d3d1d0"></div>
<div style="left:495px;top:757px;width:1px;height:19px;background:#d3d1d0"></div>
<div style="left:545px;top:757px;width:1px;height:19px;background:#d3d1d0"></div>
<div style="left:595px;top:757px;width:1px;height:19px;background:#d3d1d0"></div>
<div style="left:645px;top:757px;width:1px;height:19px;background:#d3d1d0"></div>
<div style="left:705px;top:757px;width:1px;height:19px;background:#d3d1d0"></div>
<div style="left:251px;top:776px;width:15px;height:19px;background:linear-gradient(90deg,#fff 35%,#e9e9ee);border-bottom:1px solid #e2e2e2"></div>
<div style="left:266px;top:776px;width:440px;height:19px;background:#e8e3df;border-bottom:1px solid #d3d1d0"></div>
<div class="t" style="left:266px;top:776px;width:29px;height:19px;line-height:19px;">33</div>
<div class="t" style="left:295px;top:776px;width:50px;height:19px;line-height:19px;">92</div>
<div class="t" style="left:345px;top:776px;width:100px;height:19px;line-height:19px;">0.1513</div>
<div class="t" style="left:445px;top:776px;width:50px;height:19px;line-height:19px;">0.0042</div>
<div class="t" style="left:495px;top:776px;width:50px;height:19px;line-height:19px;">3.7</div>
<div class="t" style="left:545px;top:776px;width:50px;height:19px;line-height:19px;">78.2</div>
<div class="t" style="left:595px;top:776px;width:50px;height:19px;line-height:19px;">18</div>
<div class="t" style="left:645px;top:776px;width:61px;height:19px;line-height:19px;">0.9991</div>
<div style="left:295px;top:776px;width:1px;height:19px;background:#d3d1d0"></div>
<div style="left:345px;top:776px;width:1px;height:19px;background:#d3d1d0"></div>
<div style="left:445px;top:776px;width:1px;height:19px;background:#d3d1d0"></div>
<div style="left:495px;top:776px;width:1px;height:19px;background:#d3d1d0"></div>
<div style="left:545px;top:776px;width:1px;height:19px;background:#d3d1d0"></div>
<div style="left:595px;top:776px;width:1px;height:19px;background:#d3d1d0"></div>
<div style="left:645px;top:776px;width:1px;height:19px;background:#d3d1d0"></div>
<div style="left:705px;top:776px;width:1px;height:19px;background:#d3d1d0"></div>
<div style="left:251px;top:795px;width:15px;height:19px;background:linear-gradient(90deg,#fff 35%,#e9e9ee);border-bottom:1px solid #e2e2e2"></div>
<div style="left:266px;top:795px;width:440px;height:19px;background:#d8d6d8;border-bottom:1px solid #d3d1d0"></div>
<div class="t" style="left:266px;top:795px;width:29px;height:19px;line-height:19px;">34</div>
<div class="t" style="left:295px;top:795px;width:50px;height:19px;line-height:19px;">93</div>
<div class="t" style="left:345px;top:795px;width:100px;height:19px;line-height:19px;">0.1522</div>
<div class="t" style="left:445px;top:795px;width:50px;height:19px;line-height:19px;">0.0043</div>
<div class="t" style="left:495px;top:795px;width:50px;height:19px;line-height:19px;">3.7</div>
<div class="t" style="left:545px;top:795px;width:50px;height:19px;line-height:19px;">78</div>
<div class="t" style="left:595px;top:795px;width:50px;height:19px;line-height:19px;">18.3</div>
<div class="t" style="left:645px;top:795px;width:61px;height:19px;line-height:19px;">0.999</div>
<div style="left:295px;top:795px;width:1px;height:19px;background:#d3d1d0"></div>
<div style="left:345px;top:795px;width:1px;height:19px;background:#d3d1d0"></div>
<div style="left:445px;top:795px;width:1px;height:19px;background:#d3d1d0"></div>
<div style="left:495px;top:795px;width:1px;height:19px;background:#d3d1d0"></div>
<div style="left:545px;top:795px;width:1px;height:19px;background:#d3d1d0"></div>
<div style="left:595px;top:795px;width:1px;height:19px;background:#d3d1d0"></div>
<div style="left:645px;top:795px;width:1px;height:19px;background:#d3d1d0"></div>
<div style="left:705px;top:795px;width:1px;height:19px;background:#d3d1d0"></div>
<div style="left:251px;top:814px;width:15px;height:19px;background:linear-gradient(90deg,#fff 35%,#e9e9ee);border-bottom:1px solid #e2e2e2"></div>
<div style="left:266px;top:814px;width:440px;height:19px;background:#e8e3df;border-bottom:1px solid #d3d1d0"></div>
<div class="t" style="left:266px;top:814px;width:29px;height:19px;line-height:19px;">35</div>
<div class="t" style="left:295px;top:814px;width:50px;height:19px;line-height:19px;">94</div>
<div class="t" style="left:345px;top:814px;width:100px;height:19px;line-height:19px;">0.1526</div>
<div class="t" style="left:445px;top:814px;width:50px;height:19px;line-height:19px;">0.0044</div>
<div class="t" style="left:495px;top:814px;width:50px;height:19px;line-height:19px;">3.7</div>
<div class="t" style="left:545px;top:814px;width:50px;height:19px;line-height:19px;">77.9</div>
<div class="t" style="left:595px;top:814px;width:50px;height:19px;line-height:19px;">18.4</div>
<div class="t" style="left:645px;top:814px;width:61px;height:19px;line-height:19px;">0.9989</div>
<div style="left:295px;top:814px;width:1px;height:19px;background:#d3d1d0"></div>
<div style="left:345px;top:814px;width:1px;height:19px;background:#d3d1d0"></div>
<div style="left:445px;top:814px;width:1px;height:19px;background:#d3d1d0"></div>
<div style="left:495px;top:814px;width:1px;height:19px;background:#d3d1d0"></div>
<div style="left:545px;top:814px;width:1px;height:19px;background:#d3d1d0"></div>
<div style="left:595px;top:814px;width:1px;height:19px;background:#d3d1d0"></div>
<div style="left:645px;top:814px;width:1px;height:19px;background:#d3d1d0"></div>
<div style="left:705px;top:814px;width:1px;height:19px;background:#d3d1d0"></div>
<div style="left:251px;top:833px;width:15px;height:19px;background:linear-gradient(90deg,#fff 35%,#e9e9ee);border-bottom:1px solid #e2e2e2"></div>
<div style="left:266px;top:833px;width:440px;height:19px;background:#d8d6d8;border-bottom:1px solid #d3d1d0"></div>
<div class="t" style="left:266px;top:833px;width:29px;height:19px;line-height:19px;">36</div>
<div class="t" style="left:295px;top:833px;width:50px;height:19px;line-height:19px;">95</div>
<div class="t" style="left:345px;top:833px;width:100px;height:19px;line-height:19px;">0.1524</div>
<div class="t" style="left:445px;top:833px;width:50px;height:19px;line-height:19px;">0.0043</div>
<div class="t" style="left:495px;top:833px;width:50px;height:19px;line-height:19px;">3.7</div>
<div class="t" style="left:545px;top:833px;width:50px;height:19px;line-height:19px;">78</div>
<div class="t" style="left:595px;top:833px;width:50px;height:19px;line-height:19px;">18.3</div>
<div class="t" style="left:645px;top:833px;width:61px;height:19px;line-height:19px;">0.999</div>
<div style="left:295px;top:833px;width:1px;height:19px;background:#d3d1d0"></div>
<div style="left:345px;top:833px;width:1px;height:19px;background:#d3d1d0"></div>
<div style="left:445px;top:833px;width:1px;height:19px;background:#d3d1d0"></div>
<div style="left:495px;top:833px;width:1px;height:19px;background:#d3d1d0"></div>
<div style="left:545px;top:833px;width:1px;height:19px;background:#d3d1d0"></div>
<div style="left:595px;top:833px;width:1px;height:19px;background:#d3d1d0"></div>
<div style="left:645px;top:833px;width:1px;height:19px;background:#d3d1d0"></div>
<div style="left:705px;top:833px;width:1px;height:19px;background:#d3d1d0"></div>
<div style="left:251px;top:852px;width:15px;height:19px;background:linear-gradient(90deg,#fff 35%,#e9e9ee);border-bottom:1px solid #e2e2e2"></div>
<div style="left:266px;top:852px;width:440px;height:19px;background:#e8e3df;border-bottom:1px solid #d3d1d0"></div>
<div class="t" style="left:266px;top:852px;width:29px;height:19px;line-height:19px;">37</div>
<div class="t" style="left:295px;top:852px;width:50px;height:19px;line-height:19px;">96</div>
<div class="t" style="left:345px;top:852px;width:100px;height:19px;line-height:19px;">0.1512</div>
<div class="t" style="left:445px;top:852px;width:50px;height:19px;line-height:19px;">0.0042</div>
<div class="t" style="left:495px;top:852px;width:50px;height:19px;line-height:19px;">3.7</div>
<div class="t" style="left:545px;top:852px;width:50px;height:19px;line-height:19px;">78.2</div>
<div class="t" style="left:595px;top:852px;width:50px;height:19px;line-height:19px;">18</div>
<div class="t" style="left:645px;top:852px;width:61px;height:19px;line-height:19px;">0.9991</div>
<div style="left:295px;top:852px;width:1px;height:19px;background:#d3d1d0"></div>
<div style="left:345px;top:852px;width:1px;height:19px;background:#d3d1d0"></div>
<div style="left:445px;top:852px;width:1px;height:19px;background:#d3d1d0"></div>
<div style="left:495px;top:852px;width:1px;height:19px;background:#d3d1d0"></div>
<div style="left:545px;top:852px;width:1px;height:19px;background:#d3d1d0"></div>
<div style="left:595px;top:852px;width:1px;height:19px;background:#d3d1d0"></div>
<div style="left:645px;top:852px;width:1px;height:19px;background:#d3d1d0"></div>
<div style="left:705px;top:852px;width:1px;height:19px;background:#d3d1d0"></div>
<div style="left:251px;top:871px;width:15px;height:19px;background:linear-gradient(90deg,#fff 35%,#e9e9ee);border-bottom:1px solid #e2e2e2"></div>
<div style="left:266px;top:871px;width:440px;height:19px;background:#d8d6d8;border-bottom:1px solid #d3d1d0"></div>
<div class="t" style="left:266px;top:871px;width:29px;height:19px;line-height:19px;">38</div>
<div class="t" style="left:295px;top:871px;width:50px;height:19px;line-height:19px;">97</div>
<div class="t" style="left:345px;top:871px;width:100px;height:19px;line-height:19px;">0.1487</div>
<div class="t" style="left:445px;top:871px;width:50px;height:19px;line-height:19px;">0.0042</div>
<div class="t" style="left:495px;top:871px;width:50px;height:19px;line-height:19px;">3.7</div>
<div class="t" style="left:545px;top:871px;width:50px;height:19px;line-height:19px;">78.9</div>
<div class="t" style="left:595px;top:871px;width:50px;height:19px;line-height:19px;">17.4</div>
<div class="t" style="left:645px;top:871px;width:61px;height:19px;line-height:19px;">0.9994</div>
<div style="left:295px;top:871px;width:1px;height:19px;background:#d3d1d0"></div>
<div style="left:345px;top:871px;width:1px;height:19px;background:#d3d1d0"></div>
<div style="left:445px;top:871px;width:1px;height:19px;background:#d3d1d0"></div>
<div style="left:495px;top:871px;width:1px;height:19px;background:#d3d1d0"></div>
<div style="left:545px;top:871px;width:1px;height:19px;background:#d3d1d0"></div>
<div style="left:595px;top:871px;width:1px;height:19px;background:#d3d1d0"></div>
<div style="left:645px;top:871px;width:1px;height:19px;background:#d3d1d0"></div>
<div style="left:705px;top:871px;width:1px;height:19px;background:#d3d1d0"></div>
<div style="left:251px;top:890px;width:15px;height:19px;background:linear-gradient(90deg,#fff 35%,#e9e9ee);border-bottom:1px solid #e2e2e2"></div>
<div style="left:266px;top:890px;width:440px;height:19px;background:#e8e3df;border-bottom:1px solid #d3d1d0"></div>
<div class="t" style="left:266px;top:890px;width:29px;height:19px;line-height:19px;">39</div>
<div class="t" style="left:295px;top:890px;width:50px;height:19px;line-height:19px;">98</div>
<div class="t" style="left:345px;top:890px;width:100px;height:19px;line-height:19px;">0.1452</div>
<div class="t" style="left:445px;top:890px;width:50px;height:19px;line-height:19px;">0.0041</div>
<div class="t" style="left:495px;top:890px;width:50px;height:19px;line-height:19px;">3.7</div>
<div class="t" style="left:545px;top:890px;width:50px;height:19px;line-height:19px;">79.8</div>
<div class="t" style="left:595px;top:890px;width:50px;height:19px;line-height:19px;">16.4</div>
<div class="t" style="left:645px;top:890px;width:61px;height:19px;line-height:19px;">0.9995</div>
<div style="left:295px;top:890px;width:1px;height:19px;background:#d3d1d0"></div>
<div style="left:345px;top:890px;width:1px;height:19px;background:#d3d1d0"></div>
<div style="left:445px;top:890px;width:1px;height:19px;background:#d3d1d0"></div>
<div style="left:495px;top:890px;width:1px;height:19px;background:#d3d1d0"></div>
<div style="left:545px;top:890px;width:1px;height:19px;background:#d3d1d0"></div>
<div style="left:595px;top:890px;width:1px;height:19px;background:#d3d1d0"></div>
<div style="left:645px;top:890px;width:1px;height:19px;background:#d3d1d0"></div>
<div style="left:705px;top:890px;width:1px;height:19px;background:#d3d1d0"></div>
<div style="left:251px;top:909px;width:15px;height:19px;background:linear-gradient(90deg,#fff 35%,#e9e9ee);border-bottom:1px solid #e2e2e2"></div>
<div style="left:266px;top:909px;width:440px;height:19px;background:#d8d6d8;border-bottom:1px solid #d3d1d0"></div>
<div class="t" style="left:266px;top:909px;width:29px;height:19px;line-height:19px;">40</div>
<div class="t" style="left:295px;top:909px;width:50px;height:19px;line-height:19px;">99</div>
<div class="t" style="left:345px;top:909px;width:100px;height:19px;line-height:19px;">0.1421</div>
<div class="t" style="left:445px;top:909px;width:50px;height:19px;line-height:19px;">0.0041</div>
<div class="t" style="left:495px;top:909px;width:50px;height:19px;line-height:19px;">3.7</div>
<div class="t" style="left:545px;top:909px;width:50px;height:19px;line-height:19px;">80.7</div>
<div class="t" style="left:595px;top:909px;width:50px;height:19px;line-height:19px;">15.6</div>
<div class="t" style="left:645px;top:909px;width:61px;height:19px;line-height:19px;">0.9994</div>
<div style="left:295px;top:909px;width:1px;height:19px;background:#d3d1d0"></div>
<div style="left:345px;top:909px;width:1px;height:19px;background:#d3d1d0"></div>
<div style="left:445px;top:909px;width:1px;height:19px;background:#d3d1d0"></div>
<div style="left:495px;top:909px;width:1px;height:19px;background:#d3d1d0"></div>
<div style="left:545px;top:909px;width:1px;height:19px;background:#d3d1d0"></div>
<div style="left:595px;top:909px;width:1px;height:19px;background:#d3d1d0"></div>
<div style="left:645px;top:909px;width:1px;height:19px;background:#d3d1d0"></div>
<div style="left:705px;top:909px;width:1px;height:19px;background:#d3d1d0"></div>
<div class="t" style="left:852px;top:216px;width:65px;height:24px;line-height:24px;background:#828282;color:#fff;font-size:11.7px;border:1px solid #8a8a8a">Optimize</div>
<div class="t" style="left:927px;top:216px;width:65px;height:24px;line-height:24px;background:#828282;color:#fff;font-size:11.7px;border:1px solid #8a8a8a">Apply</div>
<div class="t" style="left:1002px;top:216px;width:65px;height:24px;line-height:24px;background:#828282;color:#fff;font-size:11.7px;border:1px solid #8a8a8a">Cancel</div>
<svg style="left:1210px;top:98px" width="460" height="284" viewBox="0 0 460 284"><g transform="translate(0 0)"><rect width="460" height="282" rx="3" fill="#e4e4e4"/><rect x="89" y="10" width="340" height="221" fill="#fff"/><path d="M132.5 10v221M174.5 10v221M217.5 10v221M259.5 10v221M301.5 10v221M344.5 10v221M386.5 10v221M89 187.5h340M89 143.5h340M89 98.5h340M89 54.5h340" stroke="#d2d2d2" stroke-width="1" fill="none"/><path d="M89.5 231v5M132.5 231v5M174.5 231v5M217.5 231v5M259.5 231v5M301.5 231v5M344.5 231v5M386.5 231v5M429.5 231v5M89 231.5h-4M89 187.5h-4M89 143.5h-4M89 98.5h-4M89 54.5h-4" stroke="#0f3b75" stroke-width="1" fill="none"/><path d="M327.5 10v221" stroke="#9bbb59" stroke-width="2" stroke-dasharray="6 2.100" stroke-dashoffset="1" fill="none"/><path d="M89.7 227.0L98.2 223.9L106.7 209.8L115.2 195.6L123.7 181.5L132.2 167.8L140.6 154.1L149.1 140.8L157.6 127.6L166.1 115.2L174.6 102.8L183.1 91.3L191.6 80.3L200.1 70.1L208.6 60.4L217.1 52.0L225.5 44.5L234.0 37.8L242.5 32.5L251.0 28.6L259.5 25.9L268.0 25.5L276.5 26.4L285.0 29.9L293.5 35.2L301.9 43.6L310.4 54.6L318.9 68.8L327.4 77.2L335.9 68.8L344.4 60.8L352.9 54.2L361.4 48.5L369.9 44.5L378.4 42.7L386.9 43.6L395.3 48.9L403.8 59.9L412.3 75.4L420.8 89.1" stroke="#4f81bd" stroke-width="3" fill="none" stroke-linejoin="round" stroke-linecap="round"/><rect x="89" y="10" width="340" height="221" fill="none" stroke="#0f3b75" stroke-width="2"/><g font-size="10.500" font-weight="bold" fill="#1f3d6e"><text x="83" y="234.6" text-anchor="end">0.11000</text><text x="83" y="190.4" text-anchor="end">0.12000</text><text x="83" y="146.2" text-anchor="end">0.13000</text><text x="83" y="102.0" text-anchor="end">0.14000</text><text x="83" y="57.8" text-anchor="end">0.15000</text><text x="83" y="13.6" text-anchor="end">0.16000</text><text x="89.7" y="249.2" text-anchor="middle">60</text><text x="132.2" y="249.2" text-anchor="middle">65</text><text x="174.6" y="249.2" text-anchor="middle">70</text><text x="217.1" y="249.2" text-anchor="middle">75</text><text x="259.5" y="249.2" text-anchor="middle">80</text><text x="301.9" y="249.2" text-anchor="middle">85</text><text x="344.4" y="249.2" text-anchor="middle">90</text><text x="386.9" y="249.2" text-anchor="middle">95</text><text x="429.3" y="249.2" text-anchor="middle">100</text></g><g font-size="11" font-weight="bold" font-style="italic" fill="#1f3d6e"><text x="259.0" y="271.2" text-anchor="middle">U [%]</text><text transform="translate(18.500 120.5) rotate(-90)" text-anchor="middle" font-size="10.500">C<tspan font-size="9" dy="2">v</tspan><tspan dy="-2"> [cm²/min]</tspan></text></g></g></svg>
<svg style="left:730px;top:390px" width="460" height="284" viewBox="0 0 460 284"><g transform="translate(0 0.6)"><rect width="460" height="282" rx="3" fill="#e4e4e4"/><rect x="89" y="10.5" width="340" height="221" fill="#fff"/><path d="M198.5 10.5v221M306.5 10.5v221M414.5 10.5v221M89 47.9h340M89 84.9h340M89 121.9h340M89 157.9h340M89 194.9h340" stroke="#d2d2d2" stroke-width="1" fill="none"/><path d="M89.5 231.5v5M89.5 10.5v-3.500M198.5 231.5v5M198.5 10.5v-3.500M306.5 231.5v5M306.5 10.5v-3.500M414.5 231.5v5M414.5 10.5v-3.500M89 10.9h-4M89 47.9h-4M89 84.9h-4M89 121.9h-4M89 157.9h-4M89 194.9h-4M89 231.9h-4" stroke="#0f3b75" stroke-width="1" fill="none"/><path d="M89.3 12.0L97.0 34.1L100.6 46.0L105.2 54.3L111.7 69.3L120.5 92.3L133.3 120.1L150.9 147.0L173.8 161.8L208.4 173.7L242.8 180.8L278.5 185.3L344.0 192.4L425.5 195.3" stroke="#4f81bd" stroke-width="3" fill="none" stroke-linejoin="round" stroke-linecap="round"/><circle cx="89.3" cy="12.0" r="2.900" fill="#4f81bd"/><circle cx="97.0" cy="34.1" r="2.900" fill="#4f81bd"/><circle cx="100.6" cy="46.0" r="2.900" fill="#4f81bd"/><circle cx="105.2" cy="54.3" r="2.900" fill="#4f81bd"/><circle cx="111.7" cy="69.3" r="2.900" fill="#4f81bd"/><circle cx="120.5" cy="92.3" r="2.900" fill="#4f81bd"/><circle cx="133.3" cy="120.1" r="2.900" fill="#4f81bd"/><circle cx="150.9" cy="147.0" r="2.900" fill="#4f81bd"/><circle cx="173.8" cy="161.8" r="2.900" fill="#4f81bd"/><circle cx="208.4" cy="173.7" r="2.900" fill="#4f81bd"/><circle cx="242.8" cy="180.8" r="2.900" fill="#4f81bd"/><circle cx="278.5" cy="185.3" r="2.900" fill="#4f81bd"/><circle cx="344.0" cy="192.4" r="2.900" fill="#4f81bd"/><circle cx="425.5" cy="195.3" r="2.900" fill="#4f81bd"/><path d="M89.3 17.7L97.0 34.7L100.9 44.9L105.2 54.5L111.7 69.6L120.5 91.4L133.3 119.2L150.9 147.3L173.8 162.1" stroke="#c0504d" stroke-width="3" fill="none" stroke-linejoin="round" stroke-linecap="round"/><circle cx="89.3" cy="17.7" r="2.900" fill="#c0504d"/><circle cx="97.0" cy="34.7" r="2.900" fill="#c0504d"/><circle cx="100.9" cy="44.9" r="2.900" fill="#c0504d"/><circle cx="105.2" cy="54.5" r="2.900" fill="#c0504d"/><circle cx="111.7" cy="69.6" r="2.900" fill="#c0504d"/><circle cx="120.5" cy="91.4" r="2.900" fill="#c0504d"/><circle cx="133.3" cy="119.2" r="2.900" fill="#c0504d"/><circle cx="150.9" cy="147.3" r="2.900" fill="#c0504d"/><circle cx="173.8" cy="162.1" r="2.900" fill="#c0504d"/><rect x="89" y="10.5" width="340" height="221" fill="none" stroke="#0f3b75" stroke-width="2"/><g font-size="10.500" font-weight="bold" fill="#1f3d6e"><text x="83" y="14.1" text-anchor="end">2.2</text><text x="83" y="50.9" text-anchor="end">2.3</text><text x="83" y="87.8" text-anchor="end">2.4</text><text x="83" y="124.6" text-anchor="end">2.5</text><text x="83" y="161.4" text-anchor="end">2.6</text><text x="83" y="198.3" text-anchor="end">2.7</text><text x="83" y="235.1" text-anchor="end">2.8</text><text x="89.7" y="249.7" text-anchor="middle">0</text><text x="198.0" y="249.7" text-anchor="middle">5</text><text x="306.4" y="249.7" text-anchor="middle">10</text><text x="414.7" y="249.7" text-anchor="middle">15</text></g><g font-size="11" font-weight="bold" font-style="italic" fill="#1f3d6e"><text x="259.0" y="271.7" text-anchor="middle">t<tspan font-size="8" dy="-6"> 0.5</tspan><tspan dy="6"> [ min</tspan><tspan font-size="8" dy="-6"> 0.5</tspan><tspan dy="6"> ]</tspan></text><text transform="translate(18.500 121.0) rotate(-90)" text-anchor="middle" font-size="10.500">d<tspan font-size="9" dy="2">c</tspan><tspan dy="-2"> [mm]</tspan></text></g><path d="M371 25.8h22" stroke="#4f81bd" stroke-width="3.300"/><circle cx="382.5" cy="25.8" r="2.500" fill="#4f81bd"/><text x="398" y="28.4" font-size="11" font-weight="bold" fill="#17365d">Test</text><path d="M371 43.8h22" stroke="#c0504d" stroke-width="3.300"/><circle cx="382.5" cy="43.8" r="2.500" fill="#c0504d"/><text x="398" y="46.4" font-size="11" font-weight="bold" fill="#17365d">Ideal</text></g></svg>
<svg style="left:1210px;top:390px" width="460" height="284" viewBox="0 0 460 284"><g transform="translate(0 0.6)"><rect width="460" height="282" rx="3" fill="#e4e4e4"/><rect x="89" y="10.5" width="340" height="221" fill="#fff"/><path d="M132.5 10.5v221M174.5 10.5v221M217.5 10.5v221M259.5 10.5v221M301.5 10.5v221M344.5 10.5v221M386.5 10.5v221M89 176.9h340M89 121.9h340M89 65.9h340" stroke="#d2d2d2" stroke-width="1" fill="none"/><path d="M89.5 231.5v5M132.5 231.5v5M174.5 231.5v5M217.5 231.5v5M259.5 231.5v5M301.5 231.5v5M344.5 231.5v5M386.5 231.5v5M429.5 231.5v5M89 231.9h-4M89 176.9h-4M89 121.9h-4M89 65.9h-4" stroke="#0f3b75" stroke-width="1" fill="none"/><path d="M327.5 10.5v221" stroke="#9bbb59" stroke-width="2" stroke-dasharray="6 2.100" stroke-dashoffset="1" fill="none"/><path d="M89.7 183.2L98.2 178.3L106.7 152.5L115.2 142.5L123.7 125.0L132.2 114.7L140.6 106.0L149.1 88.1L157.6 79.6L166.1 71.6L174.6 64.4L183.1 58.2L191.6 52.8L200.1 48.0L208.6 44.0L217.1 40.3L225.5 37.5L234.0 16.8L242.5 14.5L251.0 12.8L259.5 11.9L268.0 11.9L276.5 12.5L285.0 13.6L293.5 15.6L301.9 36.9L310.4 41.2L318.9 47.4L327.4 51.7L335.9 47.4L344.4 44.0L352.9 41.2L361.4 39.2L369.9 37.5L378.4 18.5L386.9 36.9L395.3 39.2L403.8 43.7L412.3 50.3L420.8 57.4" stroke="#4f81bd" stroke-width="3" fill="none" stroke-linejoin="round" stroke-linecap="round"/><rect x="89" y="10.5" width="340" height="221" fill="none" stroke="#0f3b75" stroke-width="2"/><g font-size="10.500" font-weight="bold" fill="#1f3d6e"><text x="83" y="235.1" text-anchor="end">0.0025</text><text x="83" y="179.8" text-anchor="end">0.003</text><text x="83" y="124.6" text-anchor="end">0.0035</text><text x="83" y="69.3" text-anchor="end">0.004</text><text x="83" y="14.1" text-anchor="end">0.0045</text><text x="89.7" y="249.7" text-anchor="middle">60</text><text x="132.2" y="249.7" text-anchor="middle">65</text><text x="174.6" y="249.7" text-anchor="middle">70</text><text x="217.1" y="249.7" text-anchor="middle">75</text><text x="259.5" y="249.7" text-anchor="middle">80</text><text x="301.9" y="249.7" text-anchor="middle">85</text><text x="344.4" y="249.7" text-anchor="middle">90</text><text x="386.9" y="249.7" text-anchor="middle">95</text><text x="429.3" y="249.7" text-anchor="middle">100</text></g><g font-size="11" font-weight="bold" font-style="italic" fill="#1f3d6e"><text x="259.0" y="271.7" text-anchor="middle">U [%]</text><text transform="translate(18.500 121.0) rotate(-90)" text-anchor="middle" font-size="10.500">C<tspan font-size="9" dy="2">α</tspan><tspan dy="-2"> [-]</tspan></text></g></g></svg>
<svg style="left:730px;top:683px" width="460" height="284" viewBox="0 0 460 284"><g transform="translate(0 0)"><rect width="460" height="282" rx="3" fill="#e4e4e4"/><rect x="89" y="10" width="340" height="221" fill="#fff"/><path d="M132.5 10v221M174.5 10v221M217.5 10v221M259.5 10v221M301.5 10v221M344.5 10v221M386.5 10v221M89 194.5h340M89 157.5h340M89 121.5h340M89 84.5h340M89 47.5h340" stroke="#d2d2d2" stroke-width="1" fill="none"/><path d="M89.5 231v5M132.5 231v5M174.5 231v5M217.5 231v5M259.5 231v5M301.5 231v5M344.5 231v5M386.5 231v5M429.5 231v5M89 231.5h-4M89 194.5h-4M89 157.5h-4M89 121.5h-4M89 84.5h-4M89 47.5h-4M89 10.5h-4" stroke="#0f3b75" stroke-width="1" fill="none"/><path d="M327.5 10v221" stroke="#9bbb59" stroke-width="2" stroke-dasharray="6 2.100" stroke-dashoffset="1" fill="none"/><path d="M89.7 212.0L98.2 199.9L106.7 175.2L115.2 130.6L123.7 119.4L132.2 87.3L140.6 64.3L149.1 63.0L157.6 46.3L166.1 34.9L174.6 26.4L183.1 21.6L191.6 19.9L200.1 19.9L208.6 22.2L217.1 25.8L225.5 29.3L234.0 31.7L242.5 33.4L251.0 34.7L259.5 35.4L268.0 35.8L276.5 35.2L285.0 33.9L293.5 32.1L301.9 29.9L310.4 24.0L318.9 20.5L327.4 19.9L335.9 20.9L344.4 22.7L352.9 25.3L361.4 27.7L369.9 29.3L378.4 30.1L386.9 29.7L395.3 27.1L403.8 22.5L412.3 19.6L420.8 21.2" stroke="#4f81bd" stroke-width="3" fill="none" stroke-linejoin="round" stroke-linecap="round"/><rect x="89" y="10" width="340" height="221" fill="none" stroke="#0f3b75" stroke-width="2"/><g font-size="10.500" font-weight="bold" fill="#1f3d6e"><text x="83" y="234.6" text-anchor="end">0.988</text><text x="83" y="197.8" text-anchor="end">0.99</text><text x="83" y="160.9" text-anchor="end">0.992</text><text x="83" y="124.1" text-anchor="end">0.994</text><text x="83" y="87.3" text-anchor="end">0.996</text><text x="83" y="50.4" text-anchor="end">0.998</text><text x="83" y="13.6" text-anchor="end">1</text><text x="89.7" y="249.2" text-anchor="middle">60</text><text x="132.2" y="249.2" text-anchor="middle">65</text><text x="174.6" y="249.2" text-anchor="middle">70</text><text x="217.1" y="249.2" text-anchor="middle">75</text><text x="259.5" y="249.2" text-anchor="middle">80</text><text x="301.9" y="249.2" text-anchor="middle">85</text><text x="344.4" y="249.2" text-anchor="middle">90</text><text x="386.9" y="249.2" text-anchor="middle">95</text><text x="429.3" y="249.2" text-anchor="middle">100</text></g><g font-size="11" font-weight="bold" font-style="italic" fill="#1f3d6e"><text x="259.0" y="271.2" text-anchor="middle">U [%]</text><text transform="translate(18.500 120.5) rotate(-90)" text-anchor="middle" font-size="10.500">R ² [-]</text></g></g></svg>
<svg style="left:1210px;top:683px" width="460" height="284" viewBox="0 0 460 284"><g transform="translate(0 0)"><rect width="460" height="282" rx="3" fill="#e4e4e4"/><rect x="89" y="10" width="340" height="221" fill="#fff"/><path d="M132.5 10v221M174.5 10v221M217.5 10v221M259.5 10v221M301.5 10v221M344.5 10v221M386.5 10v221M89 187.5h340M89 143.5h340M89 98.5h340M89 54.5h340" stroke="#d2d2d2" stroke-width="1" fill="none"/><path d="M89.5 231v5M132.5 231v5M174.5 231v5M217.5 231v5M259.5 231v5M301.5 231v5M344.5 231v5M386.5 231v5M429.5 231v5M89 231.5h-4M89 187.5h-4M89 143.5h-4M89 98.5h-4M89 54.5h-4M89 10.5h-4" stroke="#0f3b75" stroke-width="1" fill="none"/><path d="M327.5 10v221" stroke="#9bbb59" stroke-width="2" stroke-dasharray="6 2.100" stroke-dashoffset="1" fill="none"/><path d="M89.7 29.4L98.2 29.9L106.7 32.8L115.2 35.4L123.7 38.1L132.2 40.5L140.6 42.7L149.1 44.9L157.6 46.9L166.1 48.9L174.6 50.7L183.1 52.4L191.6 53.8L200.1 55.3L208.6 56.6L217.1 57.7L225.5 58.6L234.0 59.5L242.5 60.2L251.0 60.6L259.5 60.8L268.0 61.1L276.5 60.8L285.0 60.4L293.5 59.7L301.9 58.8L310.4 57.3L318.9 55.5L327.4 54.2L335.9 55.5L344.4 56.4L352.9 57.3L361.4 58.2L369.9 58.6L378.4 58.8L386.9 58.6L395.3 58.2L403.8 56.6L412.3 54.6L420.8 52.7" stroke="#4f81bd" stroke-width="3" fill="none" stroke-linejoin="round" stroke-linecap="round"/><path d="M89.7 219.9L98.2 219.3L106.7 216.4L115.2 213.8L123.7 211.3L132.2 208.9L140.6 206.5L149.1 204.3L157.6 202.3L166.1 200.3L174.6 198.5L183.1 197.0L191.6 195.4L200.1 193.9L208.6 192.8L217.1 191.7L225.5 190.6L234.0 189.7L242.5 189.0L251.0 188.6L259.5 188.3L268.0 188.1L276.5 188.3L285.0 188.8L293.5 189.5L301.9 190.6L310.4 191.9L318.9 193.9L327.4 195.0L335.9 193.9L344.4 192.8L352.9 191.9L361.4 191.2L369.9 190.6L378.4 190.3L386.9 190.6L395.3 191.2L403.8 192.5L412.3 194.8L420.8 196.5" stroke="#c0504d" stroke-width="3" fill="none" stroke-linejoin="round" stroke-linecap="round"/><rect x="89" y="10" width="340" height="221" fill="none" stroke="#0f3b75" stroke-width="2"/><g font-size="10.500" font-weight="bold" fill="#1f3d6e"><text x="83" y="234.6" text-anchor="end">0</text><text x="83" y="190.4" text-anchor="end">20</text><text x="83" y="146.2" text-anchor="end">40</text><text x="83" y="102.0" text-anchor="end">60</text><text x="83" y="57.8" text-anchor="end">80</text><text x="83" y="13.6" text-anchor="end">100</text><text x="89.7" y="249.2" text-anchor="middle">60</text><text x="132.2" y="249.2" text-anchor="middle">65</text><text x="174.6" y="249.2" text-anchor="middle">70</text><text x="217.1" y="249.2" text-anchor="middle">75</text><text x="259.5" y="249.2" text-anchor="middle">80</text><text x="301.9" y="249.2" text-anchor="middle">85</text><text x="344.4" y="249.2" text-anchor="middle">90</text><text x="386.9" y="249.2" text-anchor="middle">95</text><text x="429.3" y="249.2" text-anchor="middle">100</text></g><g font-size="11" font-weight="bold" font-style="italic" fill="#1f3d6e"><text x="259.0" y="271.2" text-anchor="middle">U [%]</text><text transform="translate(18.500 120.5) rotate(-90)" text-anchor="middle" font-size="10.500">r<tspan font-size="9" dy="2">p</tspan><tspan dy="-2">  &amp;  r</tspan><tspan font-size="9" dy="2">s</tspan><tspan dy="-2"> [%]</tspan></text></g><path d="M386 25.3h22" stroke="#4f81bd" stroke-width="3.300"/><text x="413" y="27.9" font-size="11" font-weight="bold" fill="#17365d">rp</text><path d="M386 43.3h22" stroke="#c0504d" stroke-width="3.300"/><text x="413" y="45.9" font-size="11" font-weight="bold" fill="#17365d">rs</text></g></svg>
</body></html>
